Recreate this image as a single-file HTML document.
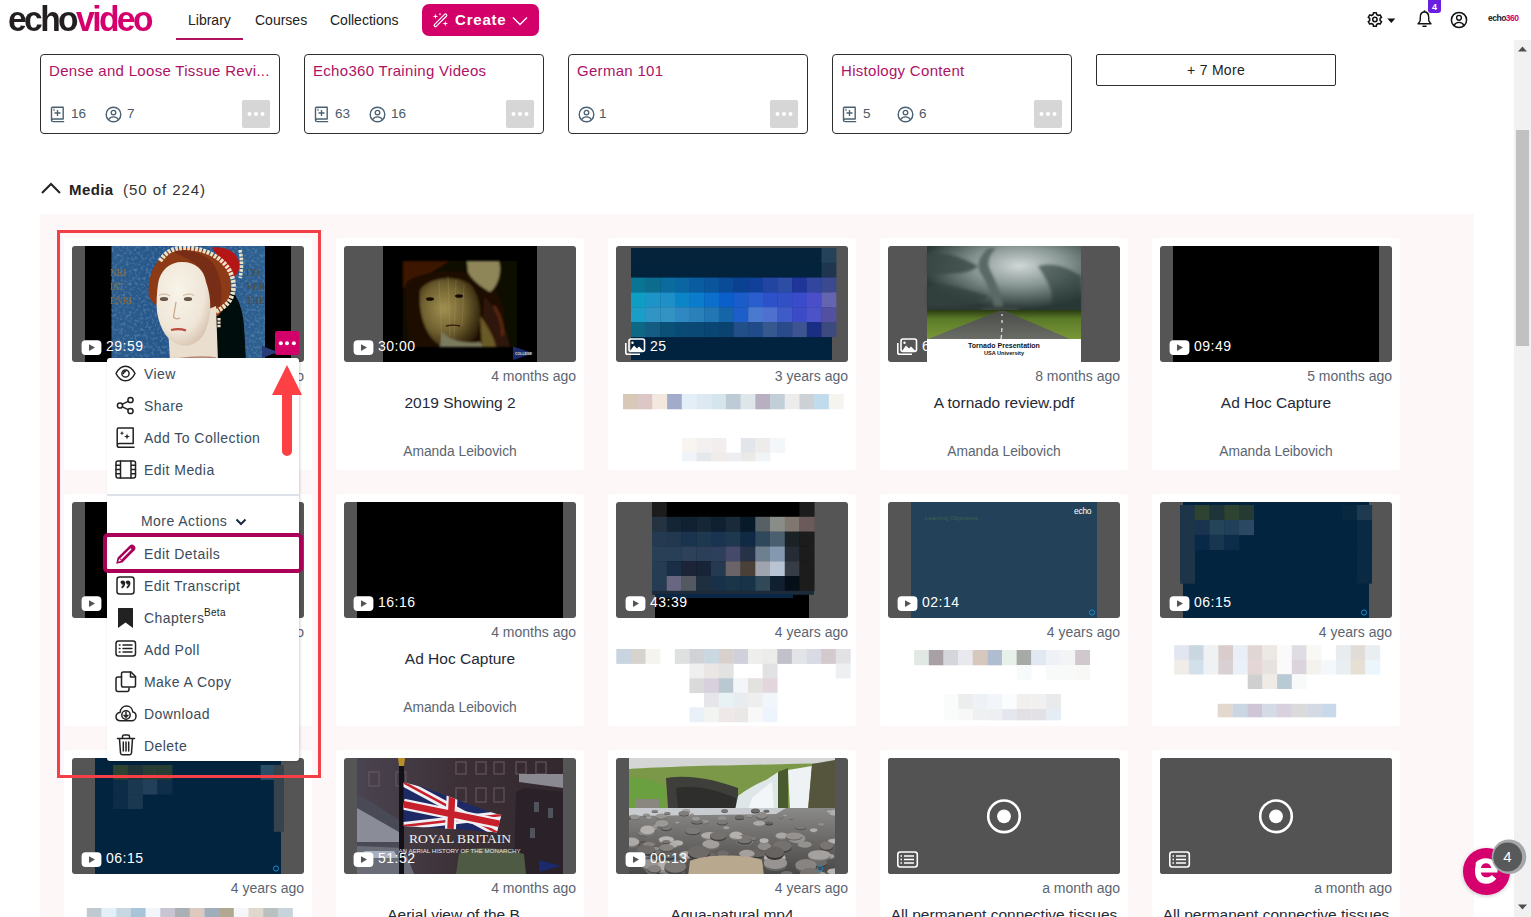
<!DOCTYPE html><html><head><meta charset="utf-8"><title>echovideo Library</title><style>
*{margin:0;padding:0;box-sizing:border-box}
html,body{width:1531px;height:917px;overflow:hidden;background:#fff;font-family:"Liberation Sans",sans-serif;color:#1f2a36}
.a{position:absolute}
svg{position:absolute;overflow:visible}
.nav{position:absolute;font-size:14px;color:#222;top:12px;line-height:16px}
.ccard{position:absolute;top:54px;width:240px;height:80px;border:1px solid #2e2e2e;border-radius:4px;background:#fff}
.ctitle{position:absolute;left:8px;top:7px;font-size:15px;line-height:18px;color:#ad1265;white-space:nowrap;letter-spacing:.3px}
.cnum{position:absolute;top:51px;font-size:13.5px;line-height:16px;color:#4a5a68}
.cmore{position:absolute;left:201px;top:45px;width:28px;height:28px;background:#d6d6d6;border-radius:2px}
.panel{position:absolute;left:40px;top:214px;width:1434px;height:703px;background:#fef7f7}
.card{position:absolute;width:248px;height:232px;background:#fff;border-radius:2px}
.thumb{position:absolute;left:8px;top:8px;width:232px;height:116px;background:#555;border-radius:3px;overflow:hidden}
.ago{position:absolute;right:8px;top:130px;font-size:14px;line-height:16px;color:#5b6571;text-align:right;white-space:nowrap}
.ttl{position:absolute;left:0;width:248px;top:156px;font-size:15.5px;line-height:18px;color:#1f2a36;text-align:center;white-space:nowrap}
.own{position:absolute;left:0;width:248px;top:206px;font-size:13.8px;line-height:16px;color:#5b6571;text-align:center;white-space:nowrap}
.dur{position:absolute;left:33px;top:92px;line-height:16px;color:#fff;font-size:14px;letter-spacing:.5px;white-space:nowrap}
.menu{position:absolute;left:107px;top:358px;width:192px;height:403px;background:#fff;border-radius:3px;box-shadow:1px 1px 3px rgba(0,0,0,.18)}
.mi{position:absolute;left:37px;font-size:14px;line-height:16px;color:#3b4b5b;white-space:nowrap;letter-spacing:.45px;margin-top:-2px}
.blk{position:absolute}
</style></head><body>
<div class="a" style="left:8px;top:2px;font-size:35px;font-weight:bold;letter-spacing:-2.7px;line-height:34px;white-space:nowrap;transform:scaleX(.96);transform-origin:0 0"><span style="color:#231f20">echo</span><span style="color:#d5006d">video</span></div>
<div class="nav" style="left:188px">Library</div>
<div class="a" style="left:176px;top:38px;width:67px;height:2px;background:#b0125f"></div>
<div class="nav" style="left:255px">Courses</div>
<div class="nav" style="left:330px">Collections</div>
<div class="a" style="left:422px;top:4px;width:117px;height:32px;background:#d4006a;border-radius:7px"></div>
<svg style="left:432px;top:12px" width="17" height="16" viewBox="0 0 17 16"><path d="M2.4 12.6 L12.8 2.2 A1.3 1.3 0 0 1 14.6 4 L4.2 14.4 A1.3 1.3 0 0 1 2.4 12.6Z" fill="none" stroke="#fff" stroke-width="1.2" stroke-linejoin="round"/><g fill="#fff"><path d="M3.5 1.4 L4.1 3.7 L6.4 4.3 L4.1 4.9 L3.5 7.2 L2.9 4.9 L0.6 4.3 L2.9 3.7Z"/><path d="M8 0.6 L8.4 1.8 L9.6 2.2 L8.4 2.6 L8 3.8 L7.6 2.6 L6.4 2.2 L7.6 1.8Z"/><path d="M13.3 8.7 L13.9 11 L16.2 11.6 L13.9 12.2 L13.3 14.5 L12.7 12.2 L10.4 11.6 L12.7 11Z"/></g></svg>
<div class="a" style="left:455px;top:11px;font-size:15px;line-height:17px;font-weight:bold;color:#fff;letter-spacing:.8px">Create</div>
<svg style="left:512px;top:16px" width="16" height="10" viewBox="0 0 16 10"><path d="M1 1.5 L8 8.5 L15 1.5" fill="none" stroke="#fff" stroke-width="1.4"/></svg>
<svg style="left:1366px;top:11px" width="18" height="18" viewBox="0 0 18 18"><path d="M10.59 13.52 L10.36 15.35 L7.44 15.35 L7.21 13.52 L5.40 12.48 L3.70 13.18 L2.24 10.66 L3.70 9.55 L3.70 7.45 L2.24 6.34 L3.70 3.82 L5.40 4.52 L7.21 3.48 L7.44 1.65 L10.36 1.65 L10.59 3.48 L12.40 4.52 L14.10 3.82 L15.56 6.34 L14.10 7.45 L14.10 9.55 L15.56 10.66 L14.10 13.18 L12.40 12.48Z" fill="none" stroke="#111" stroke-width="1.5" stroke-linejoin="round"/><circle cx="8.9" cy="8.5" r="2.2" fill="none" stroke="#111" stroke-width="1.5"/></svg>
<svg style="left:1387px;top:18px" width="9" height="6" viewBox="0 0 9 6"><path d="M0.3 0.4 L8.3 0.4 L4.3 5Z" fill="#111"/></svg>
<svg style="left:1416px;top:10px" width="17" height="18" viewBox="0 0 17 18"><path d="M8.5 2 C6 2 4.3 4.2 4.3 7.2 L4.2 10.8 L2 13.8 L15 13.8 L12.8 10.8 L12.7 7.2 C12.7 4.2 11 2 8.5 2Z" fill="none" stroke="#111" stroke-width="1.4" stroke-linejoin="round"/><path d="M7 16.2 L10 16.2" stroke="#111" stroke-width="1.6" stroke-linecap="round"/><circle cx="8.5" cy="1.2" r="0.9" fill="#111"/></svg>
<div class="a" style="left:1428px;top:0;width:13px;height:13px;background:#6a1ee0;border-radius:0 0 3px 3px;color:#fff;font-size:9px;font-weight:bold;text-align:center;line-height:9px;padding-top:3px">4</div>
<svg style="left:1450px;top:11px" width="18" height="18" viewBox="0 0 18 18"><circle cx="9" cy="9" r="7.6" fill="none" stroke="#111" stroke-width="1.5"/><circle cx="9" cy="6.8" r="2.4" fill="none" stroke="#111" stroke-width="1.4"/><path d="M3.8 14.6 C5 12.2 7 11.4 9 11.4 C11 11.4 13 12.2 14.2 14.6" fill="none" stroke="#111" stroke-width="1.4"/></svg>
<div class="a" style="left:1488px;top:13px;font-size:8.5px;line-height:10px;font-weight:bold;letter-spacing:-.5px;white-space:nowrap"><span style="color:#222">echo</span><span style="color:#d5006d">360</span></div>
<div class="a" style="left:1514px;top:40px;width:17px;height:877px;background:#f1f1f1"></div>
<svg style="left:1518px;top:46px" width="9" height="6" viewBox="0 0 9 6"><path d="M0 5.5 L9 5.5 L4.5 0.5Z" fill="#505050"/></svg>
<svg style="left:1518px;top:904px" width="9" height="6" viewBox="0 0 9 6"><path d="M0 0.5 L9 0.5 L4.5 5.5Z" fill="#505050"/></svg>
<div class="a" style="left:1516px;top:130px;width:13px;height:216px;background:#c1c1c1"></div>
<div class="ccard" style="left:40px"><div class="ctitle">Dense and Loose Tissue Revi...</div>
<svg style="left:9px;top:51px" width="16" height="17" viewBox="0 0 16 17"><path d="M1.5 14.2 L1.5 2.2 C1.5 1.6 2 1.2 2.5 1.2 L13.2 1.2 L13.2 13 L3.2 13 C2.2 13 1.5 13.6 1.5 14.3 C1.5 15 2.2 15.6 3.2 15.6 L14.2 15.6" fill="none" stroke="#4a6072" stroke-width="1.4" stroke-linejoin="round"/><path d="M7.5 4 L7.5 10 M4.5 7 L10.5 7" stroke="#4a6072" stroke-width="1.3"/><path d="M4 2.5 L4 5" stroke="#4a6072" stroke-width="1"/></svg><div class="cnum" style="left:30px">16</div><svg style="left:64px;top:51px" width="17" height="17" viewBox="0 0 17 17"><circle cx="8.5" cy="8.5" r="7.3" fill="none" stroke="#4a6072" stroke-width="1.4"/><circle cx="8.5" cy="6.6" r="2.3" fill="none" stroke="#4a6072" stroke-width="1.3"/><path d="M3.6 13.6 C4.8 11.5 6.6 10.8 8.5 10.8 C10.4 10.8 12.2 11.5 13.4 13.6" fill="none" stroke="#4a6072" stroke-width="1.3"/></svg><div class="cnum" style="left:86px">7</div>
<svg style="left:201px;top:45px" width="28" height="28" viewBox="0 0 28 28"><rect width="28" height="28" rx="2" fill="#d6d6d6"/><circle cx="7.5" cy="14" r="2" fill="#fff"/><circle cx="14" cy="14" r="2" fill="#fff"/><circle cx="20.5" cy="14" r="2" fill="#fff"/></svg></div>
<div class="ccard" style="left:304px"><div class="ctitle">Echo360 Training Videos</div>
<svg style="left:9px;top:51px" width="16" height="17" viewBox="0 0 16 17"><path d="M1.5 14.2 L1.5 2.2 C1.5 1.6 2 1.2 2.5 1.2 L13.2 1.2 L13.2 13 L3.2 13 C2.2 13 1.5 13.6 1.5 14.3 C1.5 15 2.2 15.6 3.2 15.6 L14.2 15.6" fill="none" stroke="#4a6072" stroke-width="1.4" stroke-linejoin="round"/><path d="M7.5 4 L7.5 10 M4.5 7 L10.5 7" stroke="#4a6072" stroke-width="1.3"/><path d="M4 2.5 L4 5" stroke="#4a6072" stroke-width="1"/></svg><div class="cnum" style="left:30px">63</div><svg style="left:64px;top:51px" width="17" height="17" viewBox="0 0 17 17"><circle cx="8.5" cy="8.5" r="7.3" fill="none" stroke="#4a6072" stroke-width="1.4"/><circle cx="8.5" cy="6.6" r="2.3" fill="none" stroke="#4a6072" stroke-width="1.3"/><path d="M3.6 13.6 C4.8 11.5 6.6 10.8 8.5 10.8 C10.4 10.8 12.2 11.5 13.4 13.6" fill="none" stroke="#4a6072" stroke-width="1.3"/></svg><div class="cnum" style="left:86px">16</div>
<svg style="left:201px;top:45px" width="28" height="28" viewBox="0 0 28 28"><rect width="28" height="28" rx="2" fill="#d6d6d6"/><circle cx="7.5" cy="14" r="2" fill="#fff"/><circle cx="14" cy="14" r="2" fill="#fff"/><circle cx="20.5" cy="14" r="2" fill="#fff"/></svg></div>
<div class="ccard" style="left:568px"><div class="ctitle">German 101</div>
<svg style="left:9px;top:51px" width="17" height="17" viewBox="0 0 17 17"><circle cx="8.5" cy="8.5" r="7.3" fill="none" stroke="#4a6072" stroke-width="1.4"/><circle cx="8.5" cy="6.6" r="2.3" fill="none" stroke="#4a6072" stroke-width="1.3"/><path d="M3.6 13.6 C4.8 11.5 6.6 10.8 8.5 10.8 C10.4 10.8 12.2 11.5 13.4 13.6" fill="none" stroke="#4a6072" stroke-width="1.3"/></svg><div class="cnum" style="left:30px">1</div>
<svg style="left:201px;top:45px" width="28" height="28" viewBox="0 0 28 28"><rect width="28" height="28" rx="2" fill="#d6d6d6"/><circle cx="7.5" cy="14" r="2" fill="#fff"/><circle cx="14" cy="14" r="2" fill="#fff"/><circle cx="20.5" cy="14" r="2" fill="#fff"/></svg></div>
<div class="ccard" style="left:832px"><div class="ctitle">Histology Content</div>
<svg style="left:9px;top:51px" width="16" height="17" viewBox="0 0 16 17"><path d="M1.5 14.2 L1.5 2.2 C1.5 1.6 2 1.2 2.5 1.2 L13.2 1.2 L13.2 13 L3.2 13 C2.2 13 1.5 13.6 1.5 14.3 C1.5 15 2.2 15.6 3.2 15.6 L14.2 15.6" fill="none" stroke="#4a6072" stroke-width="1.4" stroke-linejoin="round"/><path d="M7.5 4 L7.5 10 M4.5 7 L10.5 7" stroke="#4a6072" stroke-width="1.3"/><path d="M4 2.5 L4 5" stroke="#4a6072" stroke-width="1"/></svg><div class="cnum" style="left:30px">5</div><svg style="left:64px;top:51px" width="17" height="17" viewBox="0 0 17 17"><circle cx="8.5" cy="8.5" r="7.3" fill="none" stroke="#4a6072" stroke-width="1.4"/><circle cx="8.5" cy="6.6" r="2.3" fill="none" stroke="#4a6072" stroke-width="1.3"/><path d="M3.6 13.6 C4.8 11.5 6.6 10.8 8.5 10.8 C10.4 10.8 12.2 11.5 13.4 13.6" fill="none" stroke="#4a6072" stroke-width="1.3"/></svg><div class="cnum" style="left:86px">6</div>
<svg style="left:201px;top:45px" width="28" height="28" viewBox="0 0 28 28"><rect width="28" height="28" rx="2" fill="#d6d6d6"/><circle cx="7.5" cy="14" r="2" fill="#fff"/><circle cx="14" cy="14" r="2" fill="#fff"/><circle cx="20.5" cy="14" r="2" fill="#fff"/></svg></div>
<div class="a" style="left:1096px;top:54px;width:240px;height:32px;border:1px solid #2e2e2e;border-radius:2px;text-align:center;font-size:14px;line-height:30px;color:#222;letter-spacing:.3px">+ 7 More</div>
<svg style="left:41px;top:182px" width="20" height="12" viewBox="0 0 20 12"><path d="M1 11 L10 2 L19 11" fill="none" stroke="#222" stroke-width="2"/></svg>
<div class="a" style="left:69px;top:181px;font-size:15px;line-height:17px;font-weight:bold;color:#222;letter-spacing:.4px">Media</div>
<div class="a" style="left:123px;top:181px;font-size:15px;line-height:17px;color:#333;letter-spacing:.95px">(50 of 224)</div>
<div class="panel"></div>
<div class="card" style="left:64px;top:238px"><div class="thumb"><svg style="left:0;top:0" width="232" height="116" viewBox="0 0 232 116">
<defs><linearGradient id="bl" x1="0" x2="1"><stop offset="0" stop-color="#2c5c8c"/><stop offset=".45" stop-color="#23548a"/><stop offset="1" stop-color="#2e6090"/></linearGradient>
<filter id="nz" x="0" y="0" width="100%" height="100%"><feTurbulence type="fractalNoise" baseFrequency=".35" numOctaves="2" seed="3"/><feColorMatrix values="0 0 0 0 .55  0 0 0 0 .75  0 0 0 0 .95  0 0 0 1.2 -.55"/></filter>
<radialGradient id="skin" cx=".4" cy=".35" r=".7"><stop offset="0" stop-color="#f8f4e8"/><stop offset=".7" stop-color="#efe6d8"/><stop offset="1" stop-color="#d8c4b0"/></radialGradient>
<filter id="sf"><feGaussianBlur stdDeviation=".5"/></filter></defs>
<rect x="13" y="0" width="206" height="116" fill="#000"/>
<rect x="39.5" y="0" width="153.5" height="116" fill="url(#bl)"/>
<rect x="39.5" y="0" width="153.5" height="116" filter="url(#nz)" opacity=".55"/>
<g filter="url(#sf)">
<text x="38" y="30" font-family="Liberation Serif" font-size="9.5" fill="#8a7040">NRI</text>
<text x="38" y="44" font-family="Liberation Serif" font-size="9.5" fill="#8a7040">IST</text>
<text x="38" y="58" font-family="Liberation Serif" font-size="9.5" fill="#8a7040">ENRI</text>
<text x="174" y="30" font-family="Liberation Serif" font-size="9.5" fill="#4a4a38">DO</text>
<text x="174" y="44" font-family="Liberation Serif" font-size="9.5" fill="#4a4a38">VER</text>
<text x="174" y="58" font-family="Liberation Serif" font-size="9.5" fill="#4a4a38">THE</text>
<path d="M150 36 C162 44 170 56 172 80 L174 116 L142 116 L140 60Z" fill="#05070a"/>
<path d="M77 50 C74 26 88 4 110 2 C134 0 154 12 158 30 C160 44 158 56 151 64 L146 70 L92 62 C84 60 79 56 77 50Z" fill="#8c3a16"/>
<path d="M100 4 C112 2 130 6 140 16 C148 26 152 44 148 60 L136 64 C140 44 134 24 118 14 C110 10 104 8 100 4Z" fill="#6a2810" opacity=".6"/>
<path d="M140 1.5 C154 0 165 6 167 16 C168 24 166 30 160 31 L150 18Z" fill="#b41818"/>
<path d="M88 15 C94 6 100 2 112 1.8 C128 1.5 146 8 156 22 C162 32 164 42 158 54 C154 60 146 66 136 68" fill="none" stroke="#ece2c4" stroke-width="4.6" stroke-dasharray="2.8 1.2"/>
<path d="M168 4 C170 14 170 24 168 32" fill="none" stroke="#ece2c4" stroke-width="3.5" stroke-dasharray="2.6 1.2"/>
<path d="M147 72 L147 82" fill="none" stroke="#ece2c4" stroke-width="3.2" stroke-dasharray="2.4 1"/>
<path d="M96 80 L98 116 L146 116 L144 60 L120 70Z" fill="#eadfce"/>
<path d="M86 38 C88 24 98 16 110 16 C124 16 132 24 134 36 C140 52 140 72 132 88 C126 98 116 101 108 99 C96 96 88 84 85 66 C84 56 85 46 86 38Z" fill="url(#skin)"/>
<path d="M104 113 C118 111 132 110 144 112" stroke="#a06050" stroke-width="1.4" fill="none" opacity=".7"/>
<ellipse cx="92" cy="53" rx="4.2" ry="2" fill="#6a5848"/>
<ellipse cx="116" cy="53" rx="4.2" ry="2" fill="#6a5848"/>
<path d="M87 49.5 C90 47.5 95 47.5 98 50 M111 50 C114 47.5 119 47.5 122 49.5" stroke="#c8b098" stroke-width="1" fill="none"/>
<path d="M104 56 L101.5 71 C103 73 106 73 108 72" stroke="#c8aa90" stroke-width="1.3" fill="none"/>
<path d="M99 84 C103 83 110 83 114 84.5" stroke="#c04840" stroke-width="2.2" fill="none"/>
<path d="M190 100 L206 106 L190 112Z" fill="#2a3a7a"/>
</g>
</svg>
<svg style="left:9px;top:94px" width="21" height="16" viewBox="0 0 21 16"><rect x="0.6" y="0.3" width="19.8" height="14.6" rx="4" fill="#fff"/><path d="M8 4.3 L14 7.6 L8 10.9Z" fill="#555"/></svg>
<div class="dur" style="left:34px">29:59</div>
</div>
<div class="ago">4 months ago</div>
</div>
<div class="card" style="left:336px;top:238px"><div class="thumb"><svg style="left:0;top:0" width="232" height="116" viewBox="0 0 232 116">
<defs><filter id="sf2"><feGaussianBlur stdDeviation="1"/></filter>
<radialGradient id="fc" cx=".4" cy=".45" r=".65"><stop offset="0" stop-color="#a09050"/><stop offset=".55" stop-color="#706030"/><stop offset="1" stop-color="#2a1e08"/></radialGradient></defs>
<rect x="39" y="0" width="154" height="116" fill="#000"/>
<g filter="url(#sf2)">
<rect x="58.5" y="15" width="114.5" height="86" fill="#100702"/>
<path d="M59 15 L105 15 C95 22 80 30 68 40 L59 42Z" fill="#3c1606"/>
<path d="M62 36 C80 24 112 22 134 30 C148 36 156 50 160 64 L158 101 L66 101 C62 80 60 56 62 36Z" fill="#1c0a03"/>
<path d="M76 44 C84 32 110 28 126 38 C136 48 140 72 132 92 C124 100 104 102 94 98 C82 90 74 68 76 44Z" fill="url(#fc)"/>
<path d="M123 15 L155 15 C158 26 154 40 146 46 C136 40 128 34 124 26Z" fill="#8e8658"/>
<path d="M140 50 C150 60 162 80 166 101 L136 101 C138 84 140 66 140 50Z" fill="#2e1608"/>
<path d="M150 60 C156 70 160 80 158 90" stroke="#5a2810" stroke-width="3" fill="none"/>
<path d="M98 86 C106 94 118 98 136 96 L140 101 L96 101Z" fill="#7a7a5e"/>
<path d="M136 70 C144 80 150 92 152 101 L138 101Z" fill="#6a5a28"/>
</g>
<g stroke="#c0b070" stroke-width=".6" opacity=".35"><path d="M95 35 L98 95 M104 30 L106 90 M112 34 L110 92 M120 38 L118 80"/></g>
<ellipse cx="86" cy="53" rx="4" ry="1.8" fill="#140a02"/>
<ellipse cx="115" cy="50" rx="4" ry="1.8" fill="#140a02"/>
<path d="M102 80 C106 79 112 79 116 80" stroke="#3a1a08" stroke-width="1.4" fill="none"/>
<path d="M169 100.5 L190 107.3 L169 114Z" fill="#1a2a6a"/>
<text x="171" y="108.5" font-family="Liberation Sans" font-size="3.5" font-weight="bold" fill="#e8e0c0">COLLEGE</text>
</svg>
<svg style="left:9px;top:94px" width="21" height="16" viewBox="0 0 21 16"><rect x="0.6" y="0.3" width="19.8" height="14.6" rx="4" fill="#fff"/><path d="M8 4.3 L14 7.6 L8 10.9Z" fill="#555"/></svg>
<div class="dur" style="left:34px">30:00</div>
</div>
<div class="ago">4 months ago</div>
<div class="ttl">2019 Showing 2</div>
<div class="own">Amanda Leibovich</div>
</div>
<div class="card" style="left:608px;top:238px"><div class="thumb"><svg style="left:0;top:0" width="232" height="116" viewBox="0 0 232 116"><rect x="15" y="2" width="201" height="112" fill="#022340"/><rect x="15.00" y="2.00" width="14.95" height="15.10" fill="#05243c"/><rect x="29.65" y="2.00" width="14.95" height="15.10" fill="#05243c"/><rect x="44.30" y="2.00" width="14.95" height="15.10" fill="#05243c"/><rect x="58.95" y="2.00" width="14.95" height="15.10" fill="#05243c"/><rect x="73.60" y="2.00" width="14.95" height="15.10" fill="#05243c"/><rect x="88.25" y="2.00" width="14.95" height="15.10" fill="#05243c"/><rect x="102.90" y="2.00" width="14.95" height="15.10" fill="#05243c"/><rect x="117.55" y="2.00" width="14.95" height="15.10" fill="#05243c"/><rect x="132.20" y="2.00" width="14.95" height="15.10" fill="#05243c"/><rect x="146.85" y="2.00" width="14.95" height="15.10" fill="#05243c"/><rect x="161.50" y="2.00" width="14.95" height="15.10" fill="#05243c"/><rect x="176.15" y="2.00" width="14.95" height="15.10" fill="#05243c"/><rect x="190.80" y="2.00" width="14.95" height="15.10" fill="#05243c"/><rect x="205.45" y="2.00" width="14.95" height="15.10" fill="#24435a"/><rect x="15.00" y="16.80" width="14.95" height="15.10" fill="#03233d"/><rect x="29.65" y="16.80" width="14.95" height="15.10" fill="#03233d"/><rect x="44.30" y="16.80" width="14.95" height="15.10" fill="#03233d"/><rect x="58.95" y="16.80" width="14.95" height="15.10" fill="#03233d"/><rect x="73.60" y="16.80" width="14.95" height="15.10" fill="#03233d"/><rect x="88.25" y="16.80" width="14.95" height="15.10" fill="#03233d"/><rect x="102.90" y="16.80" width="14.95" height="15.10" fill="#03233d"/><rect x="117.55" y="16.80" width="14.95" height="15.10" fill="#03233d"/><rect x="132.20" y="16.80" width="14.95" height="15.10" fill="#03233d"/><rect x="146.85" y="16.80" width="14.95" height="15.10" fill="#03233d"/><rect x="161.50" y="16.80" width="14.95" height="15.10" fill="#03233d"/><rect x="176.15" y="16.80" width="14.95" height="15.10" fill="#03233d"/><rect x="190.80" y="16.80" width="14.95" height="15.10" fill="#03233d"/><rect x="205.45" y="16.80" width="14.95" height="15.10" fill="#1f3650"/><rect x="15.00" y="31.60" width="14.95" height="15.10" fill="#0a7494"/><rect x="29.65" y="31.60" width="14.95" height="15.10" fill="#0b6c8e"/><rect x="44.30" y="31.60" width="14.95" height="15.10" fill="#0a6b9c"/><rect x="58.95" y="31.60" width="14.95" height="15.10" fill="#0b65a0"/><rect x="73.60" y="31.60" width="14.95" height="15.10" fill="#0a5ca0"/><rect x="88.25" y="31.60" width="14.95" height="15.10" fill="#0a559c"/><rect x="102.90" y="31.60" width="14.95" height="15.10" fill="#0a4b97"/><rect x="117.55" y="31.60" width="14.95" height="15.10" fill="#0a4291"/><rect x="132.20" y="31.60" width="14.95" height="15.10" fill="#10409a"/><rect x="146.85" y="31.60" width="14.95" height="15.10" fill="#2245a1"/><rect x="161.50" y="31.60" width="14.95" height="15.10" fill="#2c4da3"/><rect x="176.15" y="31.60" width="14.95" height="15.10" fill="#1f3598"/><rect x="190.80" y="31.60" width="14.95" height="15.10" fill="#33469f"/><rect x="205.45" y="31.60" width="14.95" height="15.10" fill="#3b4a8f"/><rect x="15.00" y="46.40" width="14.95" height="15.10" fill="#0e9ec4"/><rect x="29.65" y="46.40" width="14.95" height="15.10" fill="#1d93c8"/><rect x="44.30" y="46.40" width="14.95" height="15.10" fill="#1f8fc8"/><rect x="58.95" y="46.40" width="14.95" height="15.10" fill="#0b84c8"/><rect x="73.60" y="46.40" width="14.95" height="15.10" fill="#0b7bcb"/><rect x="88.25" y="46.40" width="14.95" height="15.10" fill="#0b6fcb"/><rect x="102.90" y="46.40" width="14.95" height="15.10" fill="#0a5fcb"/><rect x="117.55" y="46.40" width="14.95" height="15.10" fill="#1a5cc9"/><rect x="132.20" y="46.40" width="14.95" height="15.10" fill="#2a5ecf"/><rect x="146.85" y="46.40" width="14.95" height="15.10" fill="#2c51c8"/><rect x="161.50" y="46.40" width="14.95" height="15.10" fill="#3150c6"/><rect x="176.15" y="46.40" width="14.95" height="15.10" fill="#3a4bcc"/><rect x="190.80" y="46.40" width="14.95" height="15.10" fill="#4a4ec8"/><rect x="205.45" y="46.40" width="14.95" height="15.10" fill="#6465b0"/><rect x="15.00" y="61.20" width="14.95" height="15.10" fill="#1a9dc6"/><rect x="29.65" y="61.20" width="14.95" height="15.10" fill="#3095c4"/><rect x="44.30" y="61.20" width="14.95" height="15.10" fill="#3393c3"/><rect x="58.95" y="61.20" width="14.95" height="15.10" fill="#3088c2"/><rect x="73.60" y="61.20" width="14.95" height="15.10" fill="#2a80b8"/><rect x="88.25" y="61.20" width="14.95" height="15.10" fill="#2376b4"/><rect x="102.90" y="61.20" width="14.95" height="15.10" fill="#1665a8"/><rect x="117.55" y="61.20" width="14.95" height="15.10" fill="#1d5ecb"/><rect x="132.20" y="61.20" width="14.95" height="15.10" fill="#4a7ad0"/><rect x="146.85" y="61.20" width="14.95" height="15.10" fill="#5070d0"/><rect x="161.50" y="61.20" width="14.95" height="15.10" fill="#3f5bc8"/><rect x="176.15" y="61.20" width="14.95" height="15.10" fill="#3c4cc8"/><rect x="190.80" y="61.20" width="14.95" height="15.10" fill="#4b53c6"/><rect x="205.45" y="61.20" width="14.95" height="15.10" fill="#5350a2"/><rect x="15.00" y="76.00" width="14.95" height="15.10" fill="#0d6886"/><rect x="29.65" y="76.00" width="14.95" height="15.10" fill="#155c84"/><rect x="44.30" y="76.00" width="14.95" height="15.10" fill="#0b5077"/><rect x="58.95" y="76.00" width="14.95" height="15.10" fill="#0a4b76"/><rect x="73.60" y="76.00" width="14.95" height="15.10" fill="#0a4876"/><rect x="88.25" y="76.00" width="14.95" height="15.10" fill="#0a4674"/><rect x="102.90" y="76.00" width="14.95" height="15.10" fill="#0a4270"/><rect x="117.55" y="76.00" width="14.95" height="15.10" fill="#234f88"/><rect x="132.20" y="76.00" width="14.95" height="15.10" fill="#204b88"/><rect x="146.85" y="76.00" width="14.95" height="15.10" fill="#35598f"/><rect x="161.50" y="76.00" width="14.95" height="15.10" fill="#2a4a8a"/><rect x="176.15" y="76.00" width="14.95" height="15.10" fill="#3c5490"/><rect x="190.80" y="76.00" width="14.95" height="15.10" fill="#1a2e84"/><rect x="205.45" y="76.00" width="14.95" height="15.10" fill="#3d4a7f"/></svg>
<svg style="left:8px;top:92px" width="22" height="18" viewBox="0 0 22 18"><rect x="5" y="1" width="15.5" height="12.5" rx="2" fill="none" stroke="#fff" stroke-width="1.6"/><path d="M1.8 5 L1.8 14.5 C1.8 15.6 2.5 16.3 3.6 16.3 L16 16.3" fill="none" stroke="#fff" stroke-width="1.6"/><path d="M6 13 L10 7.5 L13 10.5 L15 8.5 L19.5 13Z" fill="#fff"/><circle cx="8.5" cy="4.8" r="1.2" fill="#fff"/></svg>
<div class="dur" style="left:34px">25</div>
</div>
<div class="ago">3 years ago</div>
<svg style="left:0;top:0" width="248" height="232" viewBox="0 0 248 232"><rect x="15.00" y="156.00" width="15.00" height="15.30" fill="#d8c8b8"/><rect x="29.70" y="156.00" width="15.00" height="15.30" fill="#dcc6c6"/><rect x="44.40" y="156.00" width="15.00" height="15.30" fill="#f2e8de"/><rect x="59.10" y="156.00" width="15.00" height="15.30" fill="#a2acca"/><rect x="73.80" y="156.00" width="15.00" height="15.30" fill="#e4eef6"/><rect x="88.50" y="156.00" width="15.00" height="15.30" fill="#dde9f2"/><rect x="103.20" y="156.00" width="15.00" height="15.30" fill="#d4e6ec"/><rect x="117.90" y="156.00" width="15.00" height="15.30" fill="#bccbd6"/><rect x="132.60" y="156.00" width="15.00" height="15.30" fill="#dfe6ea"/><rect x="147.30" y="156.00" width="15.00" height="15.30" fill="#b8b0c0"/><rect x="162.00" y="156.00" width="15.00" height="15.30" fill="#c2ced8"/><rect x="176.70" y="156.00" width="15.00" height="15.30" fill="#ececec"/><rect x="191.40" y="156.00" width="15.00" height="15.30" fill="#cdd1d6"/><rect x="206.10" y="156.00" width="15.00" height="15.30" fill="#c0dbec"/><rect x="220.80" y="156.00" width="15.00" height="15.30" fill="#f6f4ee"/><rect x="74.00" y="200.00" width="15.00" height="15.00" fill="#f8f4f0"/><rect x="88.70" y="200.00" width="15.00" height="15.00" fill="#f2f0f0"/><rect x="103.40" y="200.00" width="15.00" height="15.00" fill="#f2eeee"/><rect x="132.80" y="200.00" width="15.00" height="15.00" fill="#e2e6ea"/><rect x="147.50" y="200.00" width="15.00" height="15.00" fill="#eeecea"/><rect x="162.20" y="200.00" width="15.00" height="15.00" fill="#f4f7fa"/><rect x="74.00" y="214.70" width="15.00" height="8.60" fill="#f0f4f8"/><rect x="88.70" y="214.70" width="15.00" height="8.60" fill="#e4e8ea"/><rect x="103.40" y="214.70" width="15.00" height="8.60" fill="#f0ecea"/><rect x="118.10" y="214.70" width="15.00" height="8.60" fill="#eeeef0"/><rect x="132.80" y="214.70" width="15.00" height="8.60" fill="#ebeae8"/><rect x="147.50" y="214.70" width="15.00" height="8.60" fill="#f0f4f6"/></svg>
</div>
<div class="card" style="left:880px;top:238px"><div class="thumb"><svg style="left:0;top:0" width="232" height="116" viewBox="0 0 232 116">
<defs><radialGradient id="sky" cx=".6" cy=".3" r=".65"><stop offset="0" stop-color="#d0d8d6"/><stop offset=".45" stop-color="#8a9896"/><stop offset="1" stop-color="#2a3836"/></radialGradient>
<linearGradient id="grd" x1="0" y1="0" x2="0" y2="1"><stop offset="0" stop-color="#2a3a12"/><stop offset=".3" stop-color="#5a7a28"/><stop offset="1" stop-color="#7a9838"/></linearGradient>
<linearGradient id="road" x1="0" y1="0" x2="0" y2="1"><stop offset="0" stop-color="#4a4c48"/><stop offset="1" stop-color="#6a6c66"/></linearGradient>
<filter id="tb"><feGaussianBlur stdDeviation="1.5"/></filter></defs>
<rect x="39" y="0" width="154" height="66" fill="url(#sky)"/>
<g filter="url(#tb)">
<path d="M39 8 C55 4 75 12 90 20 C80 30 60 26 39 30Z" fill="#3a4846" opacity=".8"/>
<path d="M39 40 C60 36 80 44 100 50 C90 62 60 62 39 60Z" fill="#344240" opacity=".8"/>
<path d="M150 20 C170 15 185 25 193 30 L193 66 L160 66 C170 50 160 36 150 20Z" fill="#2a3634" opacity=".6"/>
<path d="M100 2 C92 10 88 18 92 26 C98 36 104 48 106 60 L116 64 C114 50 108 36 102 24 C98 16 102 8 108 2Z" fill="#5a6866"/>
<ellipse cx="112" cy="64" rx="20" ry="4" fill="#3a4440"/>
</g>
<rect x="39" y="64" width="154" height="29" fill="url(#grd)"/>
<path d="M40 93 L111 65 L117 65 L182 93Z" fill="url(#road)"/>
<path d="M114 68 L114 70 M114 74 L114 77 M114 82 L113.6 86 M113.5 89 L113 93" stroke="#e8e8e8" stroke-width="1.2"/>
<rect x="39" y="93" width="154" height="23" fill="#fff"/>
<text x="116" y="101.5" font-family="Liberation Sans" font-size="7" font-weight="bold" fill="#111" text-anchor="middle">Tornado Presentation</text>
<text x="116" y="109" font-family="Liberation Sans" font-size="5.6" font-weight="bold" fill="#111" text-anchor="middle">USA University</text>
</svg>
<svg style="left:8px;top:92px" width="22" height="18" viewBox="0 0 22 18"><rect x="5" y="1" width="15.5" height="12.5" rx="2" fill="none" stroke="#fff" stroke-width="1.6"/><path d="M1.8 5 L1.8 14.5 C1.8 15.6 2.5 16.3 3.6 16.3 L16 16.3" fill="none" stroke="#fff" stroke-width="1.6"/><path d="M6 13 L10 7.5 L13 10.5 L15 8.5 L19.5 13Z" fill="#fff"/><circle cx="8.5" cy="4.8" r="1.2" fill="#fff"/></svg>
<div class="dur" style="left:34px">6</div>
</div>
<div class="ago">8 months ago</div>
<div class="ttl">A tornado review.pdf</div>
<div class="own">Amanda Leibovich</div>
</div>
<div class="card" style="left:1152px;top:238px"><div class="thumb"><svg style="left:0;top:0" width="232" height="116" viewBox="0 0 232 116"><rect x="13" y="0" width="206" height="116" fill="#000"/></svg>
<svg style="left:9px;top:94px" width="21" height="16" viewBox="0 0 21 16"><rect x="0.6" y="0.3" width="19.8" height="14.6" rx="4" fill="#fff"/><path d="M8 4.3 L14 7.6 L8 10.9Z" fill="#555"/></svg>
<div class="dur" style="left:34px">09:49</div>
</div>
<div class="ago">5 months ago</div>
<div class="ttl">Ad Hoc Capture</div>
<div class="own">Amanda Leibovich</div>
</div>
<div class="card" style="left:64px;top:494px"><div class="thumb"><svg style="left:0;top:0" width="232" height="116" viewBox="0 0 232 116"><rect x="13" y="0" width="206" height="116" fill="#000"/></svg>
<svg style="left:9px;top:94px" width="21" height="16" viewBox="0 0 21 16"><rect x="0.6" y="0.3" width="19.8" height="14.6" rx="4" fill="#fff"/><path d="M8 4.3 L14 7.6 L8 10.9Z" fill="#555"/></svg>
</div>
<div class="ago">4 months ago</div>
</div>
<div class="card" style="left:336px;top:494px"><div class="thumb"><svg style="left:0;top:0" width="232" height="116" viewBox="0 0 232 116"><rect x="13" y="0" width="206" height="116" fill="#000"/></svg>
<svg style="left:9px;top:94px" width="21" height="16" viewBox="0 0 21 16"><rect x="0.6" y="0.3" width="19.8" height="14.6" rx="4" fill="#fff"/><path d="M8 4.3 L14 7.6 L8 10.9Z" fill="#555"/></svg>
<div class="dur" style="left:34px">16:16</div>
</div>
<div class="ago">4 months ago</div>
<div class="ttl">Ad Hoc Capture</div>
<div class="own">Amanda Leibovich</div>
</div>
<div class="card" style="left:608px;top:494px"><div class="thumb"><svg style="left:0;top:0" width="232" height="116" viewBox="0 0 232 116"><rect x="39" y="0" width="154" height="116" fill="#000"/><rect x="36.00" y="0.00" width="15.05" height="15.10" fill="#1c1c1c"/><rect x="50.75" y="0.00" width="15.05" height="15.10" fill="#000"/><rect x="65.50" y="0.00" width="15.05" height="15.10" fill="#000"/><rect x="80.25" y="0.00" width="15.05" height="15.10" fill="#000"/><rect x="95.00" y="0.00" width="15.05" height="15.10" fill="#000"/><rect x="109.75" y="0.00" width="15.05" height="15.10" fill="#000"/><rect x="124.50" y="0.00" width="15.05" height="15.10" fill="#000"/><rect x="139.25" y="0.00" width="15.05" height="15.10" fill="#000"/><rect x="154.00" y="0.00" width="15.05" height="15.10" fill="#000"/><rect x="168.75" y="0.00" width="15.05" height="15.10" fill="#000"/><rect x="183.50" y="0.00" width="15.05" height="15.10" fill="#1c1c1c"/><rect x="36.00" y="14.80" width="15.05" height="15.10" fill="#253240"/><rect x="50.75" y="14.80" width="15.05" height="15.10" fill="#142535"/><rect x="65.50" y="14.80" width="15.05" height="15.10" fill="#102232"/><rect x="80.25" y="14.80" width="15.05" height="15.10" fill="#162636"/><rect x="95.00" y="14.80" width="15.05" height="15.10" fill="#0f2030"/><rect x="109.75" y="14.80" width="15.05" height="15.10" fill="#1a2a3a"/><rect x="124.50" y="14.80" width="15.05" height="15.10" fill="#061a2a"/><rect x="139.25" y="14.80" width="15.05" height="15.10" fill="#566065"/><rect x="154.00" y="14.80" width="15.05" height="15.10" fill="#8a8c88"/><rect x="168.75" y="14.80" width="15.05" height="15.10" fill="#807870"/><rect x="183.50" y="14.80" width="15.05" height="15.10" fill="#6a5a5a"/><rect x="36.00" y="29.60" width="15.05" height="15.10" fill="#253a50"/><rect x="50.75" y="29.60" width="15.05" height="15.10" fill="#22384f"/><rect x="65.50" y="29.60" width="15.05" height="15.10" fill="#1a3450"/><rect x="80.25" y="29.60" width="15.05" height="15.10" fill="#1e3850"/><rect x="95.00" y="29.60" width="15.05" height="15.10" fill="#183450"/><rect x="109.75" y="29.60" width="15.05" height="15.10" fill="#1e3850"/><rect x="124.50" y="29.60" width="15.05" height="15.10" fill="#102a45"/><rect x="139.25" y="29.60" width="15.05" height="15.10" fill="#30485c"/><rect x="154.00" y="29.60" width="15.05" height="15.10" fill="#4a6070"/><rect x="168.75" y="29.60" width="15.05" height="15.10" fill="#1a2226"/><rect x="183.50" y="29.60" width="15.05" height="15.10" fill="#1c1c1c"/><rect x="36.00" y="44.40" width="15.05" height="15.10" fill="#283f55"/><rect x="50.75" y="44.40" width="15.05" height="15.10" fill="#283f58"/><rect x="65.50" y="44.40" width="15.05" height="15.10" fill="#2d4258"/><rect x="80.25" y="44.40" width="15.05" height="15.10" fill="#2b4058"/><rect x="95.00" y="44.40" width="15.05" height="15.10" fill="#2d3f5a"/><rect x="109.75" y="44.40" width="15.05" height="15.10" fill="#454a6a"/><rect x="124.50" y="44.40" width="15.05" height="15.10" fill="#253248"/><rect x="139.25" y="44.40" width="15.05" height="15.10" fill="#6e8090"/><rect x="154.00" y="44.40" width="15.05" height="15.10" fill="#8498b0"/><rect x="168.75" y="44.40" width="15.05" height="15.10" fill="#252c35"/><rect x="183.50" y="44.40" width="15.05" height="15.10" fill="#1c1c1c"/><rect x="36.00" y="59.20" width="15.05" height="15.10" fill="#253c52"/><rect x="50.75" y="59.20" width="15.05" height="15.10" fill="#1a2e45"/><rect x="65.50" y="59.20" width="15.05" height="15.10" fill="#1c2438"/><rect x="80.25" y="59.20" width="15.05" height="15.10" fill="#182538"/><rect x="95.00" y="59.20" width="15.05" height="15.10" fill="#253a50"/><rect x="109.75" y="59.20" width="15.05" height="15.10" fill="#6a6468"/><rect x="124.50" y="59.20" width="15.05" height="15.10" fill="#4a4038"/><rect x="139.25" y="59.20" width="15.05" height="15.10" fill="#a0a4ae"/><rect x="154.00" y="59.20" width="15.05" height="15.10" fill="#b8c4d4"/><rect x="168.75" y="59.20" width="15.05" height="15.10" fill="#363c45"/><rect x="183.50" y="59.20" width="15.05" height="15.10" fill="#1c1c1c"/><rect x="36.00" y="74.00" width="15.05" height="15.10" fill="#253c52"/><rect x="50.75" y="74.00" width="15.05" height="15.10" fill="#686680"/><rect x="65.50" y="74.00" width="15.05" height="15.10" fill="#545860"/><rect x="80.25" y="74.00" width="15.05" height="15.10" fill="#1e3040"/><rect x="95.00" y="74.00" width="15.05" height="15.10" fill="#183048"/><rect x="109.75" y="74.00" width="15.05" height="15.10" fill="#1a3448"/><rect x="124.50" y="74.00" width="15.05" height="15.10" fill="#183248"/><rect x="139.25" y="74.00" width="15.05" height="15.10" fill="#304858"/><rect x="154.00" y="74.00" width="15.05" height="15.10" fill="#102030"/><rect x="168.75" y="74.00" width="15.05" height="15.10" fill="#050f18"/><rect x="183.50" y="74.00" width="15.05" height="15.10" fill="#1c1c1c"/><rect x="36" y="88.8" width="162" height="4" fill="#1c2a3a"/><rect x="39" y="92" width="138" height="4" fill="#0a2846"/></svg>
<svg style="left:9px;top:94px" width="21" height="16" viewBox="0 0 21 16"><rect x="0.6" y="0.3" width="19.8" height="14.6" rx="4" fill="#fff"/><path d="M8 4.3 L14 7.6 L8 10.9Z" fill="#555"/></svg>
<div class="dur" style="left:34px">43:39</div>
</div>
<div class="ago">4 years ago</div>
<svg style="left:0;top:0" width="248" height="232" viewBox="0 0 248 232"><rect x="8.30" y="155.00" width="14.93" height="14.90" fill="#c8d4e0"/><rect x="22.93" y="155.00" width="14.93" height="14.90" fill="#d6d2ce"/><rect x="37.56" y="155.00" width="14.93" height="14.90" fill="#f6f4ee"/><rect x="66.82" y="155.00" width="14.93" height="14.90" fill="#dfe1e0"/><rect x="81.45" y="155.00" width="14.93" height="14.90" fill="#d0d2d6"/><rect x="96.08" y="155.00" width="14.93" height="14.90" fill="#cad8e2"/><rect x="110.71" y="155.00" width="14.93" height="14.90" fill="#d8d0cc"/><rect x="125.34" y="155.00" width="14.93" height="14.90" fill="#cfd0da"/><rect x="139.97" y="155.00" width="14.93" height="14.90" fill="#eeeeec"/><rect x="154.60" y="155.00" width="14.93" height="14.90" fill="#ececea"/><rect x="169.23" y="155.00" width="14.93" height="14.90" fill="#c2c0ca"/><rect x="183.86" y="155.00" width="14.93" height="14.90" fill="#e2e4e8"/><rect x="198.49" y="155.00" width="14.93" height="14.90" fill="#d8dae4"/><rect x="213.12" y="155.00" width="14.93" height="14.90" fill="#d2cacc"/><rect x="227.75" y="155.00" width="14.93" height="14.90" fill="#e2e2e4"/><rect x="81.45" y="169.60" width="14.93" height="14.90" fill="#efefef"/><rect x="96.08" y="169.60" width="14.93" height="14.90" fill="#ebe6e6"/><rect x="110.71" y="169.60" width="14.93" height="14.90" fill="#e2e2e2"/><rect x="154.60" y="169.60" width="14.93" height="14.90" fill="#e2e2e4"/><rect x="227.75" y="169.60" width="14.93" height="14.90" fill="#eeeff0"/><rect x="81.45" y="184.20" width="14.93" height="14.90" fill="#dadada"/><rect x="96.08" y="184.20" width="14.93" height="14.90" fill="#d8d0dc"/><rect x="110.71" y="184.20" width="14.93" height="14.90" fill="#bac8d2"/><rect x="125.34" y="184.20" width="14.93" height="14.90" fill="#f2f6f8"/><rect x="139.97" y="184.20" width="14.93" height="14.90" fill="#e4e2de"/><rect x="154.60" y="184.20" width="14.93" height="14.90" fill="#e2d6dc"/><rect x="96.08" y="198.80" width="14.93" height="14.90" fill="#e6e6ea"/><rect x="110.71" y="198.80" width="14.93" height="14.90" fill="#e8f2f4"/><rect x="125.34" y="198.80" width="14.93" height="14.90" fill="#e8ecf0"/><rect x="139.97" y="198.80" width="14.93" height="14.90" fill="#eeeeee"/><rect x="154.60" y="198.80" width="14.93" height="14.90" fill="#f0f6fa"/><rect x="81.45" y="213.40" width="14.93" height="14.90" fill="#eaf0f8"/><rect x="96.08" y="213.40" width="14.93" height="14.90" fill="#f2f4f2"/><rect x="110.71" y="213.40" width="14.93" height="14.90" fill="#efe8e8"/><rect x="125.34" y="213.40" width="14.93" height="14.90" fill="#eae8e6"/><rect x="139.97" y="213.40" width="14.93" height="14.90" fill="#f8f8f8"/><rect x="154.60" y="213.40" width="14.93" height="14.90" fill="#eef4fc"/></svg>
</div>
<div class="card" style="left:880px;top:494px"><div class="thumb"><svg style="left:0;top:0" width="232" height="116" viewBox="0 0 232 116"><rect x="23" y="0" width="186" height="116" fill="#234159"/><text x="37" y="18" font-family="Liberation Sans" font-size="6" fill="#3f6050">Learning Objectives</text><text x="186" y="12" font-family="Liberation Sans" font-size="8.5" fill="#fff" letter-spacing="-.3">echo</text><circle cx="204" cy="110.5" r="2.6" fill="none" stroke="#1a8ad0" stroke-width="1"/></svg>
<svg style="left:9px;top:94px" width="21" height="16" viewBox="0 0 21 16"><rect x="0.6" y="0.3" width="19.8" height="14.6" rx="4" fill="#fff"/><path d="M8 4.3 L14 7.6 L8 10.9Z" fill="#555"/></svg>
<div class="dur" style="left:34px">02:14</div>
</div>
<div class="ago">4 years ago</div>
<svg style="left:0;top:0" width="248" height="232" viewBox="0 0 248 232"><rect x="34.20" y="156.00" width="14.93" height="15.30" fill="#e2e8e4"/><rect x="48.83" y="156.00" width="14.93" height="15.30" fill="#a8a0a4"/><rect x="63.46" y="156.00" width="14.93" height="15.30" fill="#d4d6dc"/><rect x="78.09" y="156.00" width="14.93" height="15.30" fill="#e8e8ee"/><rect x="92.72" y="156.00" width="14.93" height="15.30" fill="#d6c8bc"/><rect x="107.35" y="156.00" width="14.93" height="15.30" fill="#b0bcd0"/><rect x="121.98" y="156.00" width="14.93" height="15.30" fill="#e8f0ea"/><rect x="136.61" y="156.00" width="14.93" height="15.30" fill="#a8aaa8"/><rect x="151.24" y="156.00" width="14.93" height="15.30" fill="#e2e8f2"/><rect x="165.87" y="156.00" width="14.93" height="15.30" fill="#eef2f6"/><rect x="180.50" y="156.00" width="14.93" height="15.30" fill="#f2f4f6"/><rect x="195.13" y="156.00" width="14.93" height="15.30" fill="#d0c8cc"/><rect x="136.61" y="171.00" width="14.93" height="15.30" fill="#f6fafa"/><rect x="165.87" y="171.00" width="14.93" height="15.30" fill="#f8fafa"/><rect x="180.50" y="171.00" width="14.93" height="15.30" fill="#f8fafa"/><rect x="195.13" y="171.00" width="14.93" height="15.30" fill="#f8f8f6"/><rect x="63.60" y="200.00" width="14.93" height="15.30" fill="#fafcfc"/><rect x="78.23" y="200.00" width="14.93" height="15.30" fill="#eceeee"/><rect x="92.86" y="200.00" width="14.93" height="15.30" fill="#eef2f6"/><rect x="107.49" y="200.00" width="14.93" height="15.30" fill="#f2f6fa"/><rect x="122.12" y="200.00" width="14.93" height="15.30" fill="#fafcfe"/><rect x="136.75" y="200.00" width="14.93" height="15.30" fill="#f2f0ee"/><rect x="151.38" y="200.00" width="14.93" height="15.30" fill="#f0f0f0"/><rect x="166.01" y="200.00" width="14.93" height="15.30" fill="#e8eaec"/><rect x="63.60" y="215.00" width="14.93" height="11.30" fill="#fafcfc"/><rect x="78.23" y="215.00" width="14.93" height="11.30" fill="#f8f8f8"/><rect x="92.86" y="215.00" width="14.93" height="11.30" fill="#eff0f2"/><rect x="107.49" y="215.00" width="14.93" height="11.30" fill="#eeeff2"/><rect x="122.12" y="215.00" width="14.93" height="11.30" fill="#e4e8ee"/><rect x="136.75" y="215.00" width="14.93" height="11.30" fill="#e2e0e2"/><rect x="151.38" y="215.00" width="14.93" height="11.30" fill="#e2e2e6"/><rect x="166.01" y="215.00" width="14.93" height="11.30" fill="#e6ecf4"/></svg>
</div>
<div class="card" style="left:1152px;top:494px"><div class="thumb"><svg style="left:0;top:0" width="232" height="116" viewBox="0 0 232 116"><rect x="23" y="0" width="186" height="116" fill="#02243f"/><rect x="20.00" y="3.00" width="15.05" height="15.20" fill="#1e3448"/><rect x="34.75" y="3.00" width="15.05" height="15.20" fill="#2e4430"/><rect x="49.50" y="3.00" width="15.05" height="15.20" fill="#1e3438"/><rect x="64.25" y="3.00" width="15.05" height="15.20" fill="#2e4430"/><rect x="79.00" y="3.00" width="15.05" height="15.20" fill="#263a34"/><rect x="182.25" y="3.00" width="15.05" height="15.20" fill="#082840"/><rect x="197.00" y="3.00" width="15.05" height="15.20" fill="#1e3a50"/><rect x="20.00" y="17.90" width="15.05" height="15.20" fill="#1e3448"/><rect x="34.75" y="17.90" width="15.05" height="15.20" fill="#1a3450"/><rect x="49.50" y="17.90" width="15.05" height="15.20" fill="#24445a"/><rect x="64.25" y="17.90" width="15.05" height="15.20" fill="#22405a"/><rect x="79.00" y="17.90" width="15.05" height="15.20" fill="#2a4862"/><rect x="197.00" y="17.90" width="15.05" height="15.20" fill="#0a2a44"/><rect x="20.00" y="32.80" width="15.05" height="15.20" fill="#1e3448"/><rect x="34.75" y="32.80" width="15.05" height="15.20" fill="#082a48"/><rect x="49.50" y="32.80" width="15.05" height="15.20" fill="#183650"/><rect x="64.25" y="32.80" width="15.05" height="15.20" fill="#0c2c4a"/><rect x="197.00" y="32.80" width="15.05" height="15.20" fill="#0a2a44"/><rect x="20" y="47.7" width="15" height="34" fill="#1e3448"/><rect x="197" y="47.7" width="15" height="34" fill="#0a2a44"/><circle cx="204" cy="110.5" r="2.6" fill="none" stroke="#1a8ad0" stroke-width="1"/></svg>
<svg style="left:9px;top:94px" width="21" height="16" viewBox="0 0 21 16"><rect x="0.6" y="0.3" width="19.8" height="14.6" rx="4" fill="#fff"/><path d="M8 4.3 L14 7.6 L8 10.9Z" fill="#555"/></svg>
<div class="dur" style="left:34px">06:15</div>
</div>
<div class="ago">4 years ago</div>
<svg style="left:0;top:0" width="248" height="232" viewBox="0 0 248 232"><rect x="22.20" y="151.20" width="15.00" height="14.80" fill="#e2e6f0"/><rect x="36.90" y="151.20" width="15.00" height="14.80" fill="#cad6e0"/><rect x="51.60" y="151.20" width="15.00" height="14.80" fill="#eef2f2"/><rect x="66.30" y="151.20" width="15.00" height="14.80" fill="#d8cccc"/><rect x="81.00" y="151.20" width="15.00" height="14.80" fill="#eaeef6"/><rect x="95.70" y="151.20" width="15.00" height="14.80" fill="#e0d6d4"/><rect x="110.40" y="151.20" width="15.00" height="14.80" fill="#ece8e4"/><rect x="125.10" y="151.20" width="15.00" height="14.80" fill="#fafafa"/><rect x="139.80" y="151.20" width="15.00" height="14.80" fill="#e0dce4"/><rect x="154.50" y="151.20" width="15.00" height="14.80" fill="#f8f8f4"/><rect x="183.90" y="151.20" width="15.00" height="14.80" fill="#e8ecee"/><rect x="198.60" y="151.20" width="15.00" height="14.80" fill="#e0dcd8"/><rect x="213.30" y="151.20" width="15.00" height="14.80" fill="#eaeef0"/><rect x="22.20" y="165.70" width="15.00" height="14.80" fill="#f0ece8"/><rect x="36.90" y="165.70" width="15.00" height="14.80" fill="#d2e0ec"/><rect x="51.60" y="165.70" width="15.00" height="14.80" fill="#eef2f4"/><rect x="66.30" y="165.70" width="15.00" height="14.80" fill="#d8d0d2"/><rect x="81.00" y="165.70" width="15.00" height="14.80" fill="#eaf0f8"/><rect x="95.70" y="165.70" width="15.00" height="14.80" fill="#e4d6d6"/><rect x="110.40" y="165.70" width="15.00" height="14.80" fill="#e6e2e0"/><rect x="125.10" y="165.70" width="15.00" height="14.80" fill="#fafafa"/><rect x="139.80" y="165.70" width="15.00" height="14.80" fill="#dcd4dc"/><rect x="154.50" y="165.70" width="15.00" height="14.80" fill="#f4f2ee"/><rect x="169.20" y="165.70" width="15.00" height="14.80" fill="#f4f8fa"/><rect x="183.90" y="165.70" width="15.00" height="14.80" fill="#e8eef2"/><rect x="198.60" y="165.70" width="15.00" height="14.80" fill="#e6e0d4"/><rect x="213.30" y="165.70" width="15.00" height="14.80" fill="#eaf6fc"/><rect x="95.70" y="180.20" width="15.00" height="14.80" fill="#cfcfcf"/><rect x="110.40" y="180.20" width="15.00" height="14.80" fill="#efebe6"/><rect x="125.10" y="180.20" width="15.00" height="14.80" fill="#b8cad4"/><rect x="139.80" y="180.20" width="15.00" height="14.80" fill="#f8fafa"/><rect x="65.70" y="209.80" width="15.07" height="13.50" fill="#e2d8ce"/><rect x="80.47" y="209.80" width="15.07" height="13.50" fill="#cad6e2"/><rect x="95.24" y="209.80" width="15.07" height="13.50" fill="#cec6d6"/><rect x="110.01" y="209.80" width="15.07" height="13.50" fill="#d4dae6"/><rect x="124.78" y="209.80" width="15.07" height="13.50" fill="#d8d0dc"/><rect x="139.55" y="209.80" width="15.07" height="13.50" fill="#dadada"/><rect x="154.32" y="209.80" width="15.07" height="13.50" fill="#d4dae4"/><rect x="169.09" y="209.80" width="15.07" height="13.50" fill="#c8daea"/></svg>
</div>
<div class="card" style="left:64px;top:750px"><div class="thumb"><svg style="left:0;top:0" width="232" height="116" viewBox="0 0 232 116"><rect x="23" y="0" width="186" height="116" fill="#02243f"/><rect x="41.10" y="7.00" width="15.05" height="14.90" fill="#2e4430"/><rect x="55.85" y="7.00" width="15.05" height="14.90" fill="#1e3438"/><rect x="70.60" y="7.00" width="15.05" height="14.90" fill="#263e34"/><rect x="85.35" y="7.00" width="15.05" height="14.90" fill="#263e34"/><rect x="188.60" y="7.00" width="15.05" height="14.90" fill="#2a4e66"/><rect x="41.10" y="21.60" width="15.05" height="14.90" fill="#0c2c48"/><rect x="55.85" y="21.60" width="15.05" height="14.90" fill="#1a3850"/><rect x="70.60" y="21.60" width="15.05" height="14.90" fill="#22405a"/><rect x="85.35" y="21.60" width="15.05" height="14.90" fill="#0e2e4a"/><rect x="41.10" y="36.20" width="15.05" height="14.90" fill="#0c2c48"/><rect x="55.85" y="36.20" width="15.05" height="14.90" fill="#1a3850"/><rect x="201.8" y="7" width="10.2" height="66.8" fill="#36424c"/><circle cx="204" cy="110.5" r="2.6" fill="none" stroke="#1a8ad0" stroke-width="1"/></svg>
<svg style="left:9px;top:94px" width="21" height="16" viewBox="0 0 21 16"><rect x="0.6" y="0.3" width="19.8" height="14.6" rx="4" fill="#fff"/><path d="M8 4.3 L14 7.6 L8 10.9Z" fill="#555"/></svg>
<div class="dur" style="left:34px">06:15</div>
</div>
<div class="ago">4 years ago</div>
<svg style="left:0;top:0" width="248" height="232" viewBox="0 0 248 232"><rect x="22.80" y="158.00" width="15.00" height="15.00" fill="#c0c8d0"/><rect x="37.50" y="158.00" width="15.00" height="15.00" fill="#e4f0f8"/><rect x="52.20" y="158.00" width="15.00" height="15.00" fill="#c8d8e2"/><rect x="66.90" y="158.00" width="15.00" height="15.00" fill="#a8c4d8"/><rect x="81.60" y="158.00" width="15.00" height="15.00" fill="#f0f6fa"/><rect x="96.30" y="158.00" width="15.00" height="15.00" fill="#c8c4d4"/><rect x="111.00" y="158.00" width="15.00" height="15.00" fill="#aab0b4"/><rect x="125.70" y="158.00" width="15.00" height="15.00" fill="#dccac0"/><rect x="140.40" y="158.00" width="15.00" height="15.00" fill="#a0aebb"/><rect x="155.10" y="158.00" width="15.00" height="15.00" fill="#b0a890"/><rect x="169.80" y="158.00" width="15.00" height="15.00" fill="#f4f6f8"/><rect x="184.50" y="158.00" width="15.00" height="15.00" fill="#e0d8cc"/><rect x="199.20" y="158.00" width="15.00" height="15.00" fill="#b8c0c0"/><rect x="213.90" y="158.00" width="15.00" height="15.00" fill="#c8d4dc"/></svg>
</div>
<div class="card" style="left:336px;top:750px"><div class="thumb"><svg style="left:0;top:0" width="232" height="116" viewBox="0 0 232 116">
<defs><linearGradient id="bld" x1="0" x2="1"><stop offset="0" stop-color="#4a4450"/><stop offset=".5" stop-color="#3c3036"/><stop offset="1" stop-color="#32282e"/></linearGradient>
<clipPath id="fq"><path d="M59.5 24.4 C90 30 130 50 157.5 57 L153 74.6 C130 72 90 70 59.5 68Z"/></clipPath>
<filter id="rb"><feGaussianBlur stdDeviation=".5"/></filter></defs>
<rect x="13" y="0" width="206" height="116" fill="url(#bld)"/>
<g fill="none" stroke="#6a5a60" stroke-width="1.3" opacity=".8">
<rect x="25" y="14" width="10" height="14"/><rect x="52" y="14" width="10" height="14"/>
<rect x="112" y="4" width="10" height="12"/><rect x="132" y="4" width="10" height="12"/><rect x="150" y="4" width="10" height="12"/><rect x="172" y="4" width="10" height="12"/><rect x="192" y="4" width="10" height="12"/>
<rect x="112" y="30" width="10" height="14"/><rect x="132" y="30" width="10" height="14"/><rect x="150" y="30" width="10" height="14"/>
</g>
<path d="M175 16 L219 16 L219 30 L175 24Z" fill="#8a8890"/>
<path d="M180 30 L219 34 L219 116 L170 116 L172 34Z" fill="#2a2228"/>
<g fill="#5a6068" opacity=".8"><rect x="190" y="44" width="5" height="10"/><rect x="204" y="50" width="5" height="10"/><rect x="186" y="70" width="5" height="10"/></g>
<path d="M13 35 L60 65 L60 116 L13 116Z" fill="#4a4a56"/>
<path d="M13 50 L55 74 L55 84 L13 84Z" fill="#8a8c98"/>
<path d="M13 88 L60 90 L70 116 L13 116Z" fill="#6a6c78"/>
<path d="M20 93 L50 93 L54 100 L22 100Z" fill="#a8b0c0"/>
<path d="M115 96 C125 88 150 88 180 96 L182 116 L112 116Z" fill="#4e5a44"/>
<rect x="55" y="4" width="5" height="112" fill="#141018"/>
<path d="M54 0 L61 0 L60 8 L55 8Z" fill="#b8902a"/>
<g clip-path="url(#fq)">
<rect x="50" y="20" width="120" height="60" fill="#1e2a66"/>
<path d="M59.5 24.4 L153 74.6 M59.5 68 L157.5 57" stroke="#f0f0f4" stroke-width="8"/>
<path d="M59.5 24.4 L153 74.6 M59.5 68 L157.5 57" stroke="#c8202a" stroke-width="2.6"/>
<path d="M59.5 46.2 L155.2 65.8 M108.5 30 L106.2 76" stroke="#f0f0f4" stroke-width="11"/>
<path d="M59.5 46.2 L155.2 65.8 M108.5 30 L106.2 76" stroke="#c8202a" stroke-width="6.5"/>
</g>
<text x="116" y="85" font-family="Liberation Serif" font-size="13.5" fill="#f2f2f2" text-anchor="middle" textLength="102" lengthAdjust="spacingAndGlyphs">ROYAL BRITAIN</text>
<text x="115.5" y="95" font-family="Liberation Sans" font-size="6" fill="#e6e6e6" text-anchor="middle" textLength="122" lengthAdjust="spacingAndGlyphs">AN AERIAL HISTORY OF THE MONARCHY</text>
<path d="M195 102 L217 108 L195 114Z" fill="#1a2a6a"/>
</svg>
<svg style="left:9px;top:94px" width="21" height="16" viewBox="0 0 21 16"><rect x="0.6" y="0.3" width="19.8" height="14.6" rx="4" fill="#fff"/><path d="M8 4.3 L14 7.6 L8 10.9Z" fill="#555"/></svg>
<div class="dur" style="left:34px">51:52</div>
</div>
<div class="ago">4 months ago</div>
<div class="ttl">Aerial view of the B...</div>
</div>
<div class="card" style="left:608px;top:750px"><div class="thumb"><svg style="left:0;top:0" width="232" height="116" viewBox="0 0 232 116">
<defs><linearGradient id="rk" x1="0" y1="0" x2="0" y2="1"><stop offset="0" stop-color="#8a8a88"/><stop offset=".5" stop-color="#6a6866"/><stop offset="1" stop-color="#4a4846"/></linearGradient>
<clipPath id="wcl"><rect x="13" y="0" width="206" height="116"/></clipPath></defs>
<g clip-path="url(#wcl)">
<rect x="13" y="0" width="206" height="116" fill="#d4d6d6"/>
<path d="M13 11 C60 8 140 7 219 5 L219 52 L13 52Z" fill="#7a9848"/>
<path d="M13 20 C30 18 40 24 50 30 L48 50 L13 50Z" fill="#6aa040"/>
<path d="M50 20 C75 16 100 22 122 30 L122 50 L52 50Z" fill="#3e3e3a"/>
<path d="M60 30 C80 26 100 32 120 40 L120 50 L62 50Z" fill="#2e2e2c"/>
<path d="M119 52 L122 38 C130 32 140 26 150 22 L162 14 L162 52Z" fill="#dfe6e8"/>
<path d="M132 52 L136 40 L148 30 L156 24 L158 52Z" fill="#f2f6f8"/>
<path d="M162 14 L172 10 L172 52 L162 52Z" fill="#4a5a30"/>
<path d="M172 12 L196 8 L192 52 L174 52Z" fill="#eef2f4"/>
<path d="M196 6 L219 2 L219 52 L192 52Z" fill="#55553e"/>
<rect x="19" y="41" width="24" height="10" fill="#8a8680"/>
<rect x="13" y="50" width="206" height="66" fill="url(#rk)"/>
<path d="M13 50 L170 50 L160 56 L13 58Z" fill="#c8ccd0"/>
<ellipse cx="128.7" cy="83.4" rx="8.8" ry="4.3" fill="#737373"/><ellipse cx="128.7" cy="81.9" rx="8.8" ry="4.3" fill="#a5a29f"/><ellipse cx="50.3" cy="110.4" rx="11.5" ry="5.7" fill="#808080"/><ellipse cx="50.3" cy="108.4" rx="11.5" ry="5.7" fill="#b2afac"/><ellipse cx="30.0" cy="105.3" rx="6.8" ry="2.8" fill="#838383"/><ellipse cx="30.0" cy="104.3" rx="6.8" ry="2.8" fill="#b5b2af"/><ellipse cx="218.2" cy="55.7" rx="5.1" ry="2.7" fill="#808080"/><ellipse cx="218.2" cy="54.8" rx="5.1" ry="2.7" fill="#b2afac"/><ellipse cx="142.1" cy="96.3" rx="10.0" ry="4.1" fill="#363636"/><ellipse cx="142.1" cy="94.9" rx="10.0" ry="4.1" fill="#686562"/><ellipse cx="61.3" cy="65.0" rx="2.4" ry="1.2" fill="#6a6a6a"/><ellipse cx="61.3" cy="64.6" rx="2.4" ry="1.2" fill="#9c9996"/><ellipse cx="51.4" cy="91.8" rx="5.2" ry="2.4" fill="#323232"/><ellipse cx="51.4" cy="91.0" rx="5.2" ry="2.4" fill="#64615e"/><ellipse cx="107.0" cy="97.0" rx="5.9" ry="3.5" fill="#3c3c3c"/><ellipse cx="107.0" cy="95.7" rx="5.9" ry="3.5" fill="#6e6b68"/><ellipse cx="76.8" cy="99.6" rx="5.7" ry="2.6" fill="#3a3a3a"/><ellipse cx="76.8" cy="98.7" rx="5.7" ry="2.6" fill="#6c6966"/><ellipse cx="32.9" cy="89.8" rx="4.2" ry="1.9" fill="#3a3a3a"/><ellipse cx="32.9" cy="89.2" rx="4.2" ry="1.9" fill="#6c6966"/><ellipse cx="189.6" cy="116.0" rx="4.8" ry="2.1" fill="#383838"/><ellipse cx="189.6" cy="115.2" rx="4.8" ry="2.1" fill="#6a6764"/><ellipse cx="217.8" cy="83.8" rx="5.7" ry="2.3" fill="#828282"/><ellipse cx="217.8" cy="83.0" rx="5.7" ry="2.3" fill="#b4b1ae"/><ellipse cx="153.1" cy="65.7" rx="3.8" ry="1.7" fill="#333333"/><ellipse cx="153.1" cy="65.1" rx="3.8" ry="1.7" fill="#65625f"/><ellipse cx="170.7" cy="116.6" rx="5.9" ry="2.7" fill="#3e3e3e"/><ellipse cx="170.7" cy="115.6" rx="5.9" ry="2.7" fill="#706d6a"/><ellipse cx="108.6" cy="53.3" rx="3.2" ry="1.7" fill="#4a4a4a"/><ellipse cx="108.6" cy="52.7" rx="3.2" ry="1.7" fill="#7c7976"/><ellipse cx="50.4" cy="82.7" rx="7.6" ry="3.2" fill="#848484"/><ellipse cx="50.4" cy="81.5" rx="7.6" ry="3.2" fill="#b6b3b0"/><ellipse cx="93.7" cy="78.5" rx="8.5" ry="3.4" fill="#7d7d7d"/><ellipse cx="93.7" cy="77.3" rx="8.5" ry="3.4" fill="#afaca9"/><ellipse cx="197.6" cy="72.7" rx="3.7" ry="1.8" fill="#7f7f7f"/><ellipse cx="197.6" cy="72.1" rx="3.7" ry="1.8" fill="#b1aeab"/><ellipse cx="31.3" cy="96.1" rx="11.1" ry="4.9" fill="#535353"/><ellipse cx="31.3" cy="94.4" rx="11.1" ry="4.9" fill="#85827f"/><ellipse cx="139.4" cy="53.4" rx="4.3" ry="2.1" fill="#3b3b3b"/><ellipse cx="139.4" cy="52.6" rx="4.3" ry="2.1" fill="#6d6a67"/><ellipse cx="133.5" cy="58.5" rx="2.8" ry="1.5" fill="#616161"/><ellipse cx="133.5" cy="57.9" rx="2.8" ry="1.5" fill="#93908d"/><ellipse cx="37.0" cy="94.6" rx="7.9" ry="4.5" fill="#434343"/><ellipse cx="37.0" cy="93.1" rx="7.9" ry="4.5" fill="#75726f"/><ellipse cx="48.8" cy="110.4" rx="5.8" ry="3.4" fill="#808080"/><ellipse cx="48.8" cy="109.2" rx="5.8" ry="3.4" fill="#b2afac"/><ellipse cx="50.2" cy="69.7" rx="6.0" ry="3.5" fill="#4b4b4b"/><ellipse cx="50.2" cy="68.5" rx="6.0" ry="3.5" fill="#7d7a77"/><ellipse cx="92.3" cy="98.4" rx="7.6" ry="3.2" fill="#383838"/><ellipse cx="92.3" cy="97.3" rx="7.6" ry="3.2" fill="#6a6764"/><ellipse cx="18.2" cy="59.7" rx="5.7" ry="2.5" fill="#646464"/><ellipse cx="18.2" cy="58.9" rx="5.7" ry="2.5" fill="#969390"/><ellipse cx="184.6" cy="69.8" rx="5.4" ry="2.5" fill="#484848"/><ellipse cx="184.6" cy="69.0" rx="5.4" ry="2.5" fill="#7a7774"/><ellipse cx="217.2" cy="114.3" rx="5.8" ry="2.9" fill="#858585"/><ellipse cx="217.2" cy="113.3" rx="5.8" ry="2.9" fill="#b7b4b1"/><ellipse cx="140.2" cy="109.7" rx="6.9" ry="4.0" fill="#4c4c4c"/><ellipse cx="140.2" cy="108.3" rx="6.9" ry="4.0" fill="#7e7b78"/><ellipse cx="24.7" cy="102.6" rx="7.4" ry="3.3" fill="#373737"/><ellipse cx="24.7" cy="101.4" rx="7.4" ry="3.3" fill="#696663"/><ellipse cx="88.2" cy="64.3" rx="4.7" ry="2.0" fill="#606060"/><ellipse cx="88.2" cy="63.6" rx="4.7" ry="2.0" fill="#928f8c"/><ellipse cx="105.5" cy="61.8" rx="3.4" ry="1.9" fill="#747474"/><ellipse cx="105.5" cy="61.1" rx="3.4" ry="1.9" fill="#a6a3a0"/><ellipse cx="39.8" cy="91.1" rx="3.8" ry="1.5" fill="#5f5f5f"/><ellipse cx="39.8" cy="90.6" rx="3.8" ry="1.5" fill="#918e8b"/><ellipse cx="214.1" cy="99.0" rx="4.1" ry="2.2" fill="#6f6f6f"/><ellipse cx="214.1" cy="98.3" rx="4.1" ry="2.2" fill="#a19e9b"/><ellipse cx="75.9" cy="56.8" rx="2.3" ry="1.0" fill="#6b6b6b"/><ellipse cx="75.9" cy="56.4" rx="2.3" ry="1.0" fill="#9d9a97"/><ellipse cx="166.2" cy="89.9" rx="9.5" ry="5.2" fill="#424242"/><ellipse cx="166.2" cy="88.0" rx="9.5" ry="5.2" fill="#74716e"/><ellipse cx="204.0" cy="105.7" rx="7.2" ry="3.9" fill="#3b3b3b"/><ellipse cx="204.0" cy="104.4" rx="7.2" ry="3.9" fill="#6d6a67"/><ellipse cx="98.4" cy="111.8" rx="11.5" ry="6.6" fill="#7b7b7b"/><ellipse cx="98.4" cy="109.5" rx="11.5" ry="6.6" fill="#adaaa7"/><ellipse cx="150.4" cy="53.4" rx="2.9" ry="1.2" fill="#3b3b3b"/><ellipse cx="150.4" cy="53.0" rx="2.9" ry="1.2" fill="#6d6a67"/><ellipse cx="145.6" cy="58.4" rx="5.6" ry="3.2" fill="#5c5c5c"/><ellipse cx="145.6" cy="57.3" rx="5.6" ry="3.2" fill="#8e8b88"/><ellipse cx="165.8" cy="78.7" rx="6.2" ry="3.0" fill="#777777"/><ellipse cx="165.8" cy="77.6" rx="6.2" ry="3.0" fill="#a9a6a3"/><ellipse cx="169.0" cy="57.9" rx="2.0" ry="1.0" fill="#6f6f6f"/><ellipse cx="169.0" cy="57.5" rx="2.0" ry="1.0" fill="#a19e9b"/><ellipse cx="213.0" cy="53.9" rx="2.1" ry="1.1" fill="#868686"/><ellipse cx="213.0" cy="53.5" rx="2.1" ry="1.1" fill="#b8b5b2"/><ellipse cx="64.2" cy="113.5" rx="4.7" ry="2.2" fill="#808080"/><ellipse cx="64.2" cy="112.8" rx="4.7" ry="2.2" fill="#b2afac"/><ellipse cx="46.0" cy="66.6" rx="6.4" ry="3.4" fill="#6a6a6a"/><ellipse cx="46.0" cy="65.4" rx="6.4" ry="3.4" fill="#9c9996"/><ellipse cx="61.2" cy="85.8" rx="5.9" ry="2.6" fill="#838383"/><ellipse cx="61.2" cy="84.9" rx="5.9" ry="2.6" fill="#b5b2af"/><ellipse cx="180.9" cy="82.2" rx="8.5" ry="4.9" fill="#636363"/><ellipse cx="180.9" cy="80.4" rx="8.5" ry="4.9" fill="#95928f"/><ellipse cx="205.2" cy="67.0" rx="3.3" ry="1.4" fill="#5e5e5e"/><ellipse cx="205.2" cy="66.5" rx="3.3" ry="1.4" fill="#908d8a"/><ellipse cx="189.9" cy="109.4" rx="10.6" ry="6.2" fill="#555555"/><ellipse cx="189.9" cy="107.2" rx="10.6" ry="6.2" fill="#878481"/><ellipse cx="33.9" cy="108.0" rx="8.4" ry="4.9" fill="#666666"/><ellipse cx="33.9" cy="106.2" rx="8.4" ry="4.9" fill="#989592"/><ellipse cx="120.2" cy="78.5" rx="6.7" ry="3.6" fill="#818181"/><ellipse cx="120.2" cy="77.2" rx="6.7" ry="3.6" fill="#b3b0ad"/><ellipse cx="25.8" cy="82.5" rx="3.3" ry="1.9" fill="#373737"/><ellipse cx="25.8" cy="81.9" rx="3.3" ry="1.9" fill="#696663"/><ellipse cx="69.6" cy="98.0" rx="6.6" ry="3.5" fill="#7a7a7a"/><ellipse cx="69.6" cy="96.8" rx="6.6" ry="3.5" fill="#aca9a6"/><ellipse cx="38.8" cy="53.7" rx="3.2" ry="1.3" fill="#545454"/><ellipse cx="38.8" cy="53.3" rx="3.2" ry="1.3" fill="#868380"/><ellipse cx="39.9" cy="68.1" rx="2.6" ry="1.4" fill="#6b6b6b"/><ellipse cx="39.9" cy="67.7" rx="2.6" ry="1.4" fill="#9d9a97"/><ellipse cx="123.5" cy="59.9" rx="4.5" ry="2.1" fill="#3b3b3b"/><ellipse cx="123.5" cy="59.2" rx="4.5" ry="2.1" fill="#6d6a67"/><ellipse cx="52.3" cy="98.3" rx="7.5" ry="3.3" fill="#333333"/><ellipse cx="52.3" cy="97.2" rx="7.5" ry="3.3" fill="#65625f"/><ellipse cx="123.4" cy="102.5" rx="4.4" ry="2.0" fill="#5e5e5e"/><ellipse cx="123.4" cy="101.8" rx="4.4" ry="2.0" fill="#908d8a"/><ellipse cx="210.7" cy="89.0" rx="6.8" ry="4.1" fill="#464646"/><ellipse cx="210.7" cy="87.6" rx="6.8" ry="4.1" fill="#787572"/><ellipse cx="177.9" cy="79.2" rx="8.2" ry="3.4" fill="#636363"/><ellipse cx="177.9" cy="78.0" rx="8.2" ry="3.4" fill="#95928f"/><ellipse cx="106.1" cy="61.5" rx="4.6" ry="2.7" fill="#626262"/><ellipse cx="106.1" cy="60.6" rx="4.6" ry="2.7" fill="#94918e"/><ellipse cx="148.4" cy="89.7" rx="6.8" ry="3.9" fill="#5d5d5d"/><ellipse cx="148.4" cy="88.3" rx="6.8" ry="3.9" fill="#8f8c89"/><ellipse cx="148.1" cy="83.4" rx="4.4" ry="2.4" fill="#848484"/><ellipse cx="148.1" cy="82.6" rx="4.4" ry="2.4" fill="#b6b3b0"/><ellipse cx="36.2" cy="114.2" rx="6.9" ry="3.3" fill="#3d3d3d"/><ellipse cx="36.2" cy="113.0" rx="6.9" ry="3.3" fill="#6f6c69"/><ellipse cx="123.8" cy="118.5" rx="12.5" ry="5.8" fill="#343434"/><ellipse cx="123.8" cy="116.5" rx="12.5" ry="5.8" fill="#666360"/><ellipse cx="27.5" cy="75.9" rx="5.2" ry="2.6" fill="#555555"/><ellipse cx="27.5" cy="75.0" rx="5.2" ry="2.6" fill="#878481"/><ellipse cx="16.0" cy="85.4" rx="8.4" ry="3.5" fill="#363636"/><ellipse cx="16.0" cy="84.2" rx="8.4" ry="3.5" fill="#686562"/><ellipse cx="81.0" cy="64.2" rx="5.6" ry="2.4" fill="#454545"/><ellipse cx="81.0" cy="63.4" rx="5.6" ry="2.4" fill="#777471"/><ellipse cx="200.9" cy="119.9" rx="10.0" ry="5.3" fill="#6a6a6a"/><ellipse cx="200.9" cy="118.0" rx="10.0" ry="5.3" fill="#9c9996"/><ellipse cx="114.4" cy="116.4" rx="13.7" ry="5.7" fill="#4e4e4e"/><ellipse cx="114.4" cy="114.4" rx="13.7" ry="5.7" fill="#807d7a"/><ellipse cx="128.5" cy="82.5" rx="8.1" ry="4.2" fill="#474747"/><ellipse cx="128.5" cy="81.0" rx="8.1" ry="4.2" fill="#797673"/><ellipse cx="188.8" cy="87.6" rx="7.0" ry="3.3" fill="#626262"/><ellipse cx="188.8" cy="86.5" rx="7.0" ry="3.3" fill="#94918e"/><ellipse cx="194.5" cy="116.7" rx="10.5" ry="4.9" fill="#444444"/><ellipse cx="194.5" cy="115.0" rx="10.5" ry="4.9" fill="#767370"/><ellipse cx="121.1" cy="117.5" rx="10.3" ry="4.5" fill="#767676"/><ellipse cx="121.1" cy="115.9" rx="10.3" ry="4.5" fill="#a8a5a2"/><ellipse cx="11.0" cy="60.2" rx="3.5" ry="1.8" fill="#373737"/><ellipse cx="11.0" cy="59.5" rx="3.5" ry="1.8" fill="#696663"/><ellipse cx="94.9" cy="87.6" rx="8.6" ry="4.4" fill="#707070"/><ellipse cx="94.9" cy="86.1" rx="8.6" ry="4.4" fill="#a29f9c"/><ellipse cx="45.4" cy="59.1" rx="5.5" ry="2.7" fill="#656565"/><ellipse cx="45.4" cy="58.2" rx="5.5" ry="2.7" fill="#979491"/><ellipse cx="110.3" cy="70.3" rx="3.1" ry="1.5" fill="#6e6e6e"/><ellipse cx="110.3" cy="69.8" rx="3.1" ry="1.5" fill="#a09d9a"/><ellipse cx="33.0" cy="87.5" rx="6.1" ry="2.5" fill="#535353"/><ellipse cx="33.0" cy="86.6" rx="6.1" ry="2.5" fill="#85827f"/><ellipse cx="175.2" cy="60.9" rx="2.1" ry="0.9" fill="#4f4f4f"/><ellipse cx="175.2" cy="60.5" rx="2.1" ry="0.9" fill="#817e7b"/><ellipse cx="70.2" cy="53.4" rx="4.0" ry="1.8" fill="#717171"/><ellipse cx="70.2" cy="52.8" rx="4.0" ry="1.8" fill="#a3a09d"/><ellipse cx="164.9" cy="59.3" rx="2.4" ry="1.2" fill="#525252"/><ellipse cx="164.9" cy="58.9" rx="2.4" ry="1.2" fill="#84817e"/><ellipse cx="158.7" cy="100.9" rx="10.9" ry="4.4" fill="#838383"/><ellipse cx="158.7" cy="99.4" rx="10.9" ry="4.4" fill="#b5b2af"/><ellipse cx="122.2" cy="79.9" rx="3.9" ry="1.7" fill="#828282"/><ellipse cx="122.2" cy="79.3" rx="3.9" ry="1.7" fill="#b4b1ae"/><ellipse cx="56.3" cy="88.1" rx="4.8" ry="2.4" fill="#7d7d7d"/><ellipse cx="56.3" cy="87.2" rx="4.8" ry="2.4" fill="#afaca9"/><ellipse cx="59.3" cy="110.7" rx="11.0" ry="6.2" fill="#494949"/><ellipse cx="59.3" cy="108.5" rx="11.0" ry="6.2" fill="#7b7875"/><ellipse cx="76.8" cy="74.0" rx="7.5" ry="3.3" fill="#4a4a4a"/><ellipse cx="76.8" cy="72.8" rx="7.5" ry="3.3" fill="#7c7976"/><ellipse cx="38.4" cy="111.9" rx="6.7" ry="3.7" fill="#535353"/><ellipse cx="38.4" cy="110.6" rx="6.7" ry="3.7" fill="#85827f"/><ellipse cx="102.2" cy="79.1" rx="8.3" ry="4.2" fill="#424242"/><ellipse cx="102.2" cy="77.6" rx="8.3" ry="4.2" fill="#74716e"/><ellipse cx="143.1" cy="66.1" rx="5.9" ry="2.5" fill="#7a7a7a"/><ellipse cx="143.1" cy="65.2" rx="5.9" ry="2.5" fill="#aca9a6"/><ellipse cx="203.2" cy="98.7" rx="11.3" ry="4.8" fill="#727272"/><ellipse cx="203.2" cy="97.0" rx="11.3" ry="4.8" fill="#a4a19e"/><ellipse cx="82.8" cy="96.1" rx="11.1" ry="6.3" fill="#3b3b3b"/><ellipse cx="82.8" cy="93.9" rx="11.1" ry="6.3" fill="#6d6a67"/><ellipse cx="15.2" cy="85.3" rx="8.1" ry="4.2" fill="#7a7a7a"/><ellipse cx="15.2" cy="83.8" rx="8.1" ry="4.2" fill="#aca9a6"/><ellipse cx="50.2" cy="84.4" rx="3.9" ry="1.7" fill="#464646"/><ellipse cx="50.2" cy="83.8" rx="3.9" ry="1.7" fill="#787572"/><ellipse cx="206.5" cy="118.2" rx="5.8" ry="2.4" fill="#6d6d6d"/><ellipse cx="206.5" cy="117.4" rx="5.8" ry="2.4" fill="#9f9c99"/><ellipse cx="30.5" cy="57.7" rx="3.3" ry="1.6" fill="#5f5f5f"/><ellipse cx="30.5" cy="57.1" rx="3.3" ry="1.6" fill="#918e8b"/><ellipse cx="137.4" cy="81.0" rx="3.1" ry="1.7" fill="#4b4b4b"/><ellipse cx="137.4" cy="80.4" rx="3.1" ry="1.7" fill="#7d7a77"/><ellipse cx="106.2" cy="64.9" rx="5.4" ry="2.6" fill="#4a4a4a"/><ellipse cx="106.2" cy="64.0" rx="5.4" ry="2.6" fill="#7c7976"/><ellipse cx="30.1" cy="93.4" rx="9.3" ry="4.3" fill="#3c3c3c"/><ellipse cx="30.1" cy="91.9" rx="9.3" ry="4.3" fill="#6e6b68"/><ellipse cx="159.4" cy="107.0" rx="11.6" ry="6.1" fill="#656565"/><ellipse cx="159.4" cy="104.9" rx="11.6" ry="6.1" fill="#979491"/><ellipse cx="50.5" cy="90.8" rx="7.5" ry="3.5" fill="#535353"/><ellipse cx="50.5" cy="89.6" rx="7.5" ry="3.5" fill="#85827f"/><ellipse cx="34.7" cy="71.4" rx="6.3" ry="2.7" fill="#656565"/><ellipse cx="34.7" cy="70.4" rx="6.3" ry="2.7" fill="#979491"/><ellipse cx="79.9" cy="61.5" rx="4.2" ry="2.0" fill="#696969"/><ellipse cx="79.9" cy="60.8" rx="4.2" ry="2.0" fill="#9b9895"/><ellipse cx="96.0" cy="104.0" rx="10.1" ry="4.2" fill="#5d5d5d"/><ellipse cx="96.0" cy="102.5" rx="10.1" ry="4.2" fill="#8f8c89"/><ellipse cx="31.4" cy="73.4" rx="7.2" ry="4.3" fill="#818181"/><ellipse cx="31.4" cy="71.9" rx="7.2" ry="4.3" fill="#b3b0ad"/><ellipse cx="67.9" cy="56.1" rx="5.2" ry="2.4" fill="#4d4d4d"/><ellipse cx="67.9" cy="55.3" rx="5.2" ry="2.4" fill="#7f7c79"/><ellipse cx="130.8" cy="96.8" rx="7.8" ry="3.7" fill="#717171"/><ellipse cx="130.8" cy="95.5" rx="7.8" ry="3.7" fill="#a3a09d"/><ellipse cx="158.7" cy="96.3" rx="9.4" ry="5.6" fill="#343434"/><ellipse cx="158.7" cy="94.4" rx="9.4" ry="5.6" fill="#666360"/><ellipse cx="32.9" cy="60.1" rx="2.9" ry="1.4" fill="#727272"/><ellipse cx="32.9" cy="59.6" rx="2.9" ry="1.4" fill="#a4a19e"/><ellipse cx="51.4" cy="55.8" rx="3.1" ry="1.3" fill="#525252"/><ellipse cx="51.4" cy="55.3" rx="3.1" ry="1.3" fill="#84817e"/>
<path d="M74 103 C90 96 130 96 146 102 L148 118 L72 118Z" fill="#b8a88e"/>
</g>
<circle cx="204" cy="110.5" r="2.6" fill="none" stroke="#1a8ad0" stroke-width="1"/>
</svg>
<svg style="left:9px;top:94px" width="21" height="16" viewBox="0 0 21 16"><rect x="0.6" y="0.3" width="19.8" height="14.6" rx="4" fill="#fff"/><path d="M8 4.3 L14 7.6 L8 10.9Z" fill="#555"/></svg>
<div class="dur" style="left:34px">00:13</div>
</div>
<div class="ago">4 years ago</div>
<div class="ttl">Aqua-natural.mp4</div>
</div>
<div class="card" style="left:880px;top:750px"><div class="thumb"><svg style="left:0;top:0" width="232" height="116" viewBox="0 0 232 116"><rect width="232" height="116" fill="#535353"/><circle cx="116" cy="58.3" r="15.8" fill="none" stroke="#fff" stroke-width="2.6"/><circle cx="116" cy="58.3" r="6.9" fill="#fff"/><rect x="9.8" y="94" width="19.5" height="15" rx="2.5" fill="none" stroke="#fff" stroke-width="1.6"/><path d="M16 98 L26 98 M16 101.5 L26 101.5 M16 105 L26 105" stroke="#fff" stroke-width="1.6"/><path d="M12.5 98 L14 98 M12.5 101.5 L14 101.5 M12.5 105 L14 105" stroke="#fff" stroke-width="1.6"/></svg>
</div>
<div class="ago">a month ago</div>
<div class="ttl">All permanent connective tissues</div>
</div>
<div class="card" style="left:1152px;top:750px"><div class="thumb"><svg style="left:0;top:0" width="232" height="116" viewBox="0 0 232 116"><rect width="232" height="116" fill="#535353"/><circle cx="116" cy="58.3" r="15.8" fill="none" stroke="#fff" stroke-width="2.6"/><circle cx="116" cy="58.3" r="6.9" fill="#fff"/><rect x="9.8" y="94" width="19.5" height="15" rx="2.5" fill="none" stroke="#fff" stroke-width="1.6"/><path d="M16 98 L26 98 M16 101.5 L26 101.5 M16 105 L26 105" stroke="#fff" stroke-width="1.6"/><path d="M12.5 98 L14 98 M12.5 101.5 L14 101.5 M12.5 105 L14 105" stroke="#fff" stroke-width="1.6"/></svg>
</div>
<div class="ago">a month ago</div>
<div class="ttl">All permanent connective tissues</div>
</div>
<div class="a" style="left:57px;top:230px;width:264px;height:548px;border:3px solid #f43f47"></div>
<svg style="left:275px;top:331px" width="24" height="24" viewBox="0 0 24 24"><rect width="24" height="24" rx="2" fill="#d4006a"/><circle cx="5.8" cy="12.3" r="2" fill="#fff"/><circle cx="12" cy="12.3" r="2" fill="#fff"/><circle cx="18.9" cy="12.3" r="2" fill="#fff"/></svg>
<div class="menu">
<svg style="left:8px;top:7px" width="21" height="17" viewBox="0 0 21 17"><path d="M1 8.5 C3.5 3.5 7 1.2 10.5 1.2 C14 1.2 17.5 3.5 20 8.5 C17.5 13.5 14 15.8 10.5 15.8 C7 15.8 3.5 13.5 1 8.5Z" fill="none" stroke="#222" stroke-width="1.5" stroke-linejoin="round" stroke-linecap="round"/><circle cx="10.5" cy="8.5" r="3.6" fill="none" stroke="#222" stroke-width="1.5" stroke-linejoin="round" stroke-linecap="round"/><path d="M10.5 6.5 A2 2 0 0 0 8.5 8.5" fill="none" stroke="#222" stroke-width="1.5" stroke-linejoin="round" stroke-linecap="round" stroke-width="1.2"/></svg><div class="mi" style="top:10px">View</div>
<svg style="left:9px;top:38px" width="19" height="19" viewBox="0 0 19 19"><circle cx="14.5" cy="4" r="2.6" fill="none" stroke="#222" stroke-width="1.5" stroke-linejoin="round" stroke-linecap="round"/><circle cx="4" cy="9.5" r="2.6" fill="none" stroke="#222" stroke-width="1.5" stroke-linejoin="round" stroke-linecap="round"/><circle cx="14.5" cy="15" r="2.6" fill="none" stroke="#222" stroke-width="1.5" stroke-linejoin="round" stroke-linecap="round"/><path d="M6.3 8.2 L12.2 5.3 M6.3 10.8 L12.2 13.7" fill="none" stroke="#222" stroke-width="1.5" stroke-linejoin="round" stroke-linecap="round"/></svg><div class="mi" style="top:42px">Share</div>
<svg style="left:9px;top:69px" width="20" height="22" viewBox="0 0 20 22"><path d="M1.2 17.5 L1.2 2.5 C1.2 1.7 1.8 1 2.6 1 L17.2 1 L17.2 16.5 L3.5 16.5 C2.2 16.5 1.2 17.3 1.2 18.4 C1.2 19.5 2.2 20.3 3.5 20.3 L18 20.3" fill="none" stroke="#222" stroke-width="1.5" stroke-linejoin="round" stroke-linecap="round"/><path d="M6 4 L6.6 5.6 L8.2 6.2 L6.6 6.8 L6 8.4 L5.4 6.8 L3.8 6.2 L5.4 5.6Z" fill="#222"/><path d="M11 6.5 L11.8 8.7 L14 9.5 L11.8 10.3 L11 12.5 L10.2 10.3 L8 9.5 L10.2 8.7Z" fill="#222"/></svg><div class="mi" style="top:74px">Add To Collection</div>
<svg style="left:8px;top:102px" width="22" height="19" viewBox="0 0 22 19"><rect x="1" y="1" width="19.5" height="17" rx="2" fill="none" stroke="#222" stroke-width="1.5" stroke-linejoin="round" stroke-linecap="round"/><path d="M5.5 1 L5.5 18 M16 1 L16 18 M1 5.3 L5.5 5.3 M1 9.5 L5.5 9.5 M1 13.7 L5.5 13.7 M16 5.3 L20.5 5.3 M16 9.5 L20.5 9.5 M16 13.7 L20.5 13.7" fill="none" stroke="#222" stroke-width="1.5" stroke-linejoin="round" stroke-linecap="round"/></svg><div class="mi" style="top:106px">Edit Media</div>
<div class="a" style="left:0;top:136px;width:192px;height:2px;background:#dde2e8"></div>
<div class="mi" style="left:34px;top:157px">More Actions</div>
<svg style="left:128px;top:160px" width="12" height="8" viewBox="0 0 12 8"><path d="M1.5 1.5 L6 6 L10.5 1.5" fill="none" stroke="#1a2a40" stroke-width="2"/></svg>
<svg style="left:8px;top:185px" width="22" height="22" viewBox="0 0 22 22"><path d="M1.2 20.8 L2.6 14.6 L14.8 2.4 C16 1.2 17.8 1.2 19 2.4 L19.6 3 C20.8 4.2 20.8 6 19.6 7.2 L7.4 19.4Z" fill="#a8005a"/><path d="M6.2 15.6 L15.6 6.2" stroke="#fff" stroke-width="1.6" stroke-linecap="round"/><path d="M3.2 18.8 L4.2 15.8 L6.2 17.8Z" fill="#fff"/></svg><div class="mi" style="top:190px">Edit Details</div>
<svg style="left:9px;top:218px" width="19" height="19" viewBox="0 0 19 19"><rect x="1" y="1" width="17" height="17" rx="2.5" fill="none" stroke="#222" stroke-width="1.5" stroke-linejoin="round" stroke-linecap="round"/><path d="M5.2 7 a1.6 1.6 0 1 1 3.2 0 c0 2.5 -1.2 4 -2.8 4.8 M10.4 7 a1.6 1.6 0 1 1 3.2 0 c0 2.5 -1.2 4 -2.8 4.8" fill="none" stroke="#222" stroke-width="1.6"/><circle cx="6.8" cy="7" r="1.7" fill="#222"/><circle cx="12" cy="7" r="1.7" fill="#222"/></svg><div class="mi" style="top:222px">Edit Transcript</div>
<svg style="left:10px;top:249px" width="18" height="22" viewBox="0 0 18 22"><path d="M1 1.5 C1 1.2 1.3 1 1.6 1 L15.4 1 C15.7 1 16 1.2 16 1.5 L16 21 L8.5 15.5 L1 21Z" fill="#222"/></svg><div class="mi" style="top:254px">Chapters</div>
<svg style="left:8px;top:282px" width="22" height="18" viewBox="0 0 22 18"><rect x="1" y="1" width="19.5" height="15" rx="2.5" fill="none" stroke="#222" stroke-width="1.5" stroke-linejoin="round" stroke-linecap="round"/><path d="M8 5 L17 5 M8 8.5 L17 8.5 M8 12 L17 12 M4.3 5 L5 5 M4.3 8.5 L5 8.5 M4.3 12 L5 12" fill="none" stroke="#222" stroke-width="1.5" stroke-linejoin="round" stroke-linecap="round" stroke-width="1.7"/></svg><div class="mi" style="top:286px">Add Poll</div>
<svg style="left:8px;top:313px" width="22" height="22" viewBox="0 0 22 22"><path d="M6.5 6 L3 6 C1.8 6 1 6.8 1 8 L1 18.5 C1 19.7 1.8 20.5 3 20.5 L12 20.5 C13.2 20.5 14 19.7 14 18.5 L14 17" fill="none" stroke="#222" stroke-width="1.5" stroke-linejoin="round" stroke-linecap="round"/><path d="M6.5 2.8 C6.5 1.8 7.3 1 8.3 1 L16 1 L20.5 5.5 L20.5 14.2 C20.5 15.2 19.7 16 18.7 16 L8.3 16 C7.3 16 6.5 15.2 6.5 14.2Z" fill="none" stroke="#222" stroke-width="1.5" stroke-linejoin="round" stroke-linecap="round"/><path d="M15.5 1 L15.5 6 L20.5 6" fill="none" stroke="#222" stroke-width="1.5" stroke-linejoin="round" stroke-linecap="round"/></svg><div class="mi" style="top:318px">Make A Copy</div>
<svg style="left:8px;top:347px" width="22" height="17" viewBox="0 0 22 17"><path d="M5.5 15.8 C2.8 15.8 1 14 1 11.6 C1 9.3 2.8 7.6 5 7.6 C5.5 3.8 8.2 1 11.5 1 C15 1 17.5 3.6 17.8 7 C19.8 7.3 21 8.9 21 11.2 C21 13.8 19.2 15.8 16.5 15.8Z" fill="none" stroke="#222" stroke-width="1.5" stroke-linejoin="round" stroke-linecap="round"/><circle cx="11" cy="10" r="4.2" fill="none" stroke="#222" stroke-width="1.5" stroke-linejoin="round" stroke-linecap="round"/><path d="M11 7.3 L11 12.2 M9 10.3 L11 12.3 L13 10.3" fill="none" stroke="#222" stroke-width="1.5" stroke-linejoin="round" stroke-linecap="round" stroke-width="1.4"/></svg><div class="mi" style="top:350px">Download</div>
<svg style="left:9px;top:376px" width="20" height="22" viewBox="0 0 20 22"><path d="M1.5 4.5 L18.5 4.5 M6.5 4.5 L6.5 2.5 C6.5 1.6 7.1 1 8 1 L12 1 C12.9 1 13.5 1.6 13.5 2.5 L13.5 4.5 M3.5 4.5 L4.5 19 C4.6 20.2 5.2 20.8 6.3 20.8 L13.7 20.8 C14.8 20.8 15.4 20.2 15.5 19 L16.5 4.5 M7.3 8 L7.3 17 M10 8 L10 17 M12.7 8 L12.7 17" fill="none" stroke="#222" stroke-width="1.5" stroke-linejoin="round" stroke-linecap="round" stroke-width="1.6"/></svg><div class="mi" style="top:382px">Delete</div>
<div class="a" style="left:97px;top:249px;font-size:10px;line-height:12px;color:#222;letter-spacing:.3px">Beta</div>
</div>
<div class="a" style="left:103px;top:533px;width:200px;height:40px;border:4px solid #ab0057;border-radius:5px"></div>
<svg style="left:270px;top:363px" width="34" height="96" viewBox="0 0 34 96"><path d="M17 2 L32 32 L22 32 L22 88 A5 5 0 0 1 12 88 L12 32 L2 32Z" fill="#fc4044"/></svg>
<div class="a" style="left:1463px;top:848px;width:46.5px;height:46.5px;border-radius:50%;background:#d5006d;box-shadow:0 1px 4px rgba(0,0,0,.22)"></div>
<svg style="left:1474px;top:857px" width="25" height="28" viewBox="0 0 25 28"><path d="M12 1.3 C18.5 1.3 23.5 5.5 23.5 12.5 L23.5 15.5 L6.8 15.5 C7.2 18.5 9.4 20.3 12.4 20.3 C14.6 20.3 16.4 19.4 17.8 18 L22.3 21.8 C20 24.8 16.5 26.8 12 26.8 C5.5 26.8 1 22.3 1 14.3 C1 10 2.2 7.5 1.6 5.8 C4 2.8 7.8 1.3 12 1.3Z M6.9 10.9 L17.3 10.9 C16.8 8 14.8 6.3 12.1 6.3 C9.4 6.3 7.4 8 6.9 10.9Z" fill="#fff" fill-rule="evenodd"/></svg>
<svg style="left:1490px;top:839px" width="38" height="36" viewBox="0 0 38 36"><circle cx="19" cy="17.8" r="17.3" fill="#a6a7a9"/><circle cx="17.7" cy="18" r="14.4" fill="#58595b"/><text x="17.5" y="23.2" font-family="Liberation Sans" font-size="15" fill="#fff" text-anchor="middle">4</text></svg>
</body></html>
